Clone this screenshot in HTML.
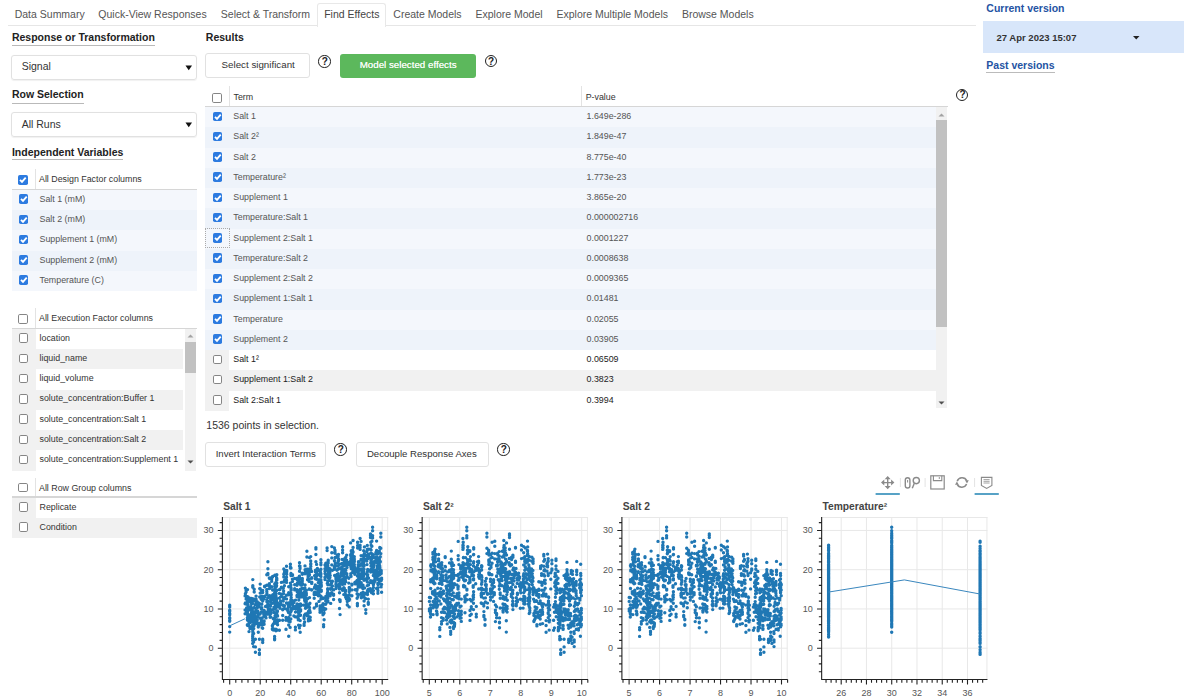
<!DOCTYPE html>
<html><head><meta charset="utf-8"><style>
html,body{margin:0;padding:0;background:#fff;width:1200px;height:696px;overflow:hidden;position:relative}
body{font-family:"Liberation Sans",sans-serif}
.t{position:absolute;white-space:nowrap;line-height:1}
.b{position:absolute}
</style></head><body>
<div class="b" style="left:8.00px;top:25.20px;width:968.00px;height:1.00px;background:#e6e6e6"></div>
<div class="b" style="left:316.70px;top:2.50px;width:67.10px;height:23.70px;border:1px solid #e8e8e8;border-bottom:none;border-radius:3px 3px 0 0;background:#fff"></div>
<div class="t" style="left:14.70px;top:9.01px;font-size:10.5px;color:#555;font-weight:normal;">Data Summary</div>
<div class="t" style="left:98.30px;top:9.01px;font-size:10.5px;color:#555;font-weight:normal;">Quick-View Responses</div>
<div class="t" style="left:220.80px;top:9.01px;font-size:10.5px;color:#555;font-weight:normal;">Select &amp; Transform</div>
<div class="t" style="left:324.20px;top:9.01px;font-size:10.5px;color:#444;font-weight:normal;">Find Effects</div>
<div class="t" style="left:393.30px;top:9.01px;font-size:10.5px;color:#555;font-weight:normal;">Create Models</div>
<div class="t" style="left:475.50px;top:9.01px;font-size:10.5px;color:#555;font-weight:normal;">Explore Model</div>
<div class="t" style="left:556.50px;top:9.01px;font-size:10.5px;color:#555;font-weight:normal;">Explore Multiple Models</div>
<div class="t" style="left:681.90px;top:9.01px;font-size:10.5px;color:#555;font-weight:normal;">Browse Models</div>
<div class="t" style="left:11.90px;top:31.61px;font-size:10.5px;color:#222;font-weight:bold;">Response or Transformation</div>
<div class="b" style="left:11.90px;top:44.60px;width:142.90px;height:1.00px;background:#b9b9b9"></div>
<div class="t" style="left:11.90px;top:89.41px;font-size:10.5px;color:#222;font-weight:bold;">Row Selection</div>
<div class="b" style="left:11.90px;top:102.60px;width:71.80px;height:1.00px;background:#b9b9b9"></div>
<div class="t" style="left:11.90px;top:147.01px;font-size:10.5px;color:#222;font-weight:bold;">Independent Variables</div>
<div class="b" style="left:11.90px;top:159.20px;width:111.40px;height:1.00px;background:#b9b9b9"></div>
<div class="b" style="left:11.30px;top:54.70px;width:185.70px;height:25.00px;border:1px solid #e1e1e1;border-radius:3px;box-sizing:border-box;box-shadow:0 0.5px 1px rgba(0,0,0,0.06)"></div>
<div class="t" style="left:21.70px;top:61.41px;font-size:10.5px;color:#333;font-weight:normal;">Signal</div>
<svg class="b" style="left:184.5px;top:64.60px" width="8" height="6"><path d="M0.5 0.5 L7 0.5 L3.75 5.2 Z" fill="#111"/></svg>
<div class="b" style="left:11.30px;top:112.00px;width:185.70px;height:24.70px;border:1px solid #e1e1e1;border-radius:3px;box-sizing:border-box;box-shadow:0 0.5px 1px rgba(0,0,0,0.06)"></div>
<div class="t" style="left:21.70px;top:118.61px;font-size:10.5px;color:#333;font-weight:normal;">All Runs</div>
<svg class="b" style="left:184.5px;top:121.75px" width="8" height="6"><path d="M0.5 0.5 L7 0.5 L3.75 5.2 Z" fill="#111"/></svg>
<div class="b" style="left:18.10px;top:175.20px;width:9.5px;height:9.5px;background:#2d7be0;border-radius:1.8px"><svg width="9.5" height="9.5" viewBox="0 0 10 10" style="position:absolute;left:0;top:0"><path d="M2.1 5.1 L4.2 7.3 L8.1 2.7" stroke="#fff" stroke-width="1.9" fill="none"/></svg></div>
<div class="b" style="left:35.20px;top:168.70px;width:1.00px;height:20.60px;background:#e3e3e3"></div>
<div class="t" style="left:39.00px;top:175.31px;font-size:8.85px;color:#333;font-weight:normal;">All Design Factor columns</div>
<div class="b" style="left:11.90px;top:188.70px;width:185.10px;height:1.20px;background:#d6d6d6"></div>
<div class="b" style="left:11.90px;top:189.90px;width:185.10px;height:20.25px;background:#f4f7fc"></div>
<div class="b" style="left:18.50px;top:194.30px;width:9.5px;height:9.5px;background:#2d7be0;border-radius:1.8px"><svg width="9.5" height="9.5" viewBox="0 0 10 10" style="position:absolute;left:0;top:0"><path d="M2.1 5.1 L4.2 7.3 L8.1 2.7" stroke="#fff" stroke-width="1.9" fill="none"/></svg></div>
<div class="t" style="left:39.50px;top:194.81px;font-size:8.85px;color:#555;font-weight:normal;">Salt 1 (mM)</div>
<div class="b" style="left:11.90px;top:210.15px;width:185.10px;height:20.25px;background:#eef3fa"></div>
<div class="b" style="left:18.50px;top:214.55px;width:9.5px;height:9.5px;background:#2d7be0;border-radius:1.8px"><svg width="9.5" height="9.5" viewBox="0 0 10 10" style="position:absolute;left:0;top:0"><path d="M2.1 5.1 L4.2 7.3 L8.1 2.7" stroke="#fff" stroke-width="1.9" fill="none"/></svg></div>
<div class="t" style="left:39.50px;top:215.06px;font-size:8.85px;color:#555;font-weight:normal;">Salt 2 (mM)</div>
<div class="b" style="left:11.90px;top:230.40px;width:185.10px;height:20.25px;background:#f4f7fc"></div>
<div class="b" style="left:18.50px;top:234.80px;width:9.5px;height:9.5px;background:#2d7be0;border-radius:1.8px"><svg width="9.5" height="9.5" viewBox="0 0 10 10" style="position:absolute;left:0;top:0"><path d="M2.1 5.1 L4.2 7.3 L8.1 2.7" stroke="#fff" stroke-width="1.9" fill="none"/></svg></div>
<div class="t" style="left:39.50px;top:235.31px;font-size:8.85px;color:#555;font-weight:normal;">Supplement 1 (mM)</div>
<div class="b" style="left:11.90px;top:250.65px;width:185.10px;height:20.25px;background:#eef3fa"></div>
<div class="b" style="left:18.50px;top:255.05px;width:9.5px;height:9.5px;background:#2d7be0;border-radius:1.8px"><svg width="9.5" height="9.5" viewBox="0 0 10 10" style="position:absolute;left:0;top:0"><path d="M2.1 5.1 L4.2 7.3 L8.1 2.7" stroke="#fff" stroke-width="1.9" fill="none"/></svg></div>
<div class="t" style="left:39.50px;top:255.56px;font-size:8.85px;color:#555;font-weight:normal;">Supplement 2 (mM)</div>
<div class="b" style="left:11.90px;top:270.90px;width:185.10px;height:20.25px;background:#f4f7fc"></div>
<div class="b" style="left:18.50px;top:275.30px;width:9.5px;height:9.5px;background:#2d7be0;border-radius:1.8px"><svg width="9.5" height="9.5" viewBox="0 0 10 10" style="position:absolute;left:0;top:0"><path d="M2.1 5.1 L4.2 7.3 L8.1 2.7" stroke="#fff" stroke-width="1.9" fill="none"/></svg></div>
<div class="t" style="left:39.50px;top:275.81px;font-size:8.85px;color:#555;font-weight:normal;">Temperature (C)</div>
<div class="b" style="left:18.10px;top:314.10px;width:7.6px;height:7.6px;border:0.95px solid #858585;border-radius:1.8px;background:#fff"></div>
<div class="b" style="left:35.20px;top:308.00px;width:1.00px;height:20.20px;background:#e3e3e3"></div>
<div class="t" style="left:39.00px;top:314.21px;font-size:8.85px;color:#333;font-weight:normal;">All Execution Factor columns</div>
<div class="b" style="left:11.90px;top:327.60px;width:185.10px;height:1.20px;background:#d6d6d6"></div>
<div class="b" style="left:11.90px;top:328.80px;width:171.60px;height:20.25px;background:#f1f1f1"></div>
<div class="b" style="left:35.50px;top:328.80px;width:148.00px;height:20.25px;background:#fff"></div>
<div class="b" style="left:18.50px;top:333.40px;width:7.6px;height:7.6px;border:0.95px solid #858585;border-radius:1.8px;background:#fff"></div>
<div class="t" style="left:39.50px;top:333.71px;font-size:8.85px;color:#333;font-weight:normal;">location</div>
<div class="b" style="left:11.90px;top:349.05px;width:171.60px;height:20.25px;background:#f1f1f1"></div>
<div class="b" style="left:18.50px;top:353.65px;width:7.6px;height:7.6px;border:0.95px solid #858585;border-radius:1.8px;background:#fff"></div>
<div class="t" style="left:39.50px;top:353.96px;font-size:8.85px;color:#333;font-weight:normal;">liquid_name</div>
<div class="b" style="left:11.90px;top:369.30px;width:171.60px;height:20.25px;background:#f1f1f1"></div>
<div class="b" style="left:35.50px;top:369.30px;width:148.00px;height:20.25px;background:#fff"></div>
<div class="b" style="left:18.50px;top:373.90px;width:7.6px;height:7.6px;border:0.95px solid #858585;border-radius:1.8px;background:#fff"></div>
<div class="t" style="left:39.50px;top:374.21px;font-size:8.85px;color:#333;font-weight:normal;">liquid_volume</div>
<div class="b" style="left:11.90px;top:389.55px;width:171.60px;height:20.25px;background:#f1f1f1"></div>
<div class="b" style="left:18.50px;top:394.15px;width:7.6px;height:7.6px;border:0.95px solid #858585;border-radius:1.8px;background:#fff"></div>
<div class="t" style="left:39.50px;top:394.46px;font-size:8.85px;color:#333;font-weight:normal;">solute_concentration:Buffer 1</div>
<div class="b" style="left:11.90px;top:409.80px;width:171.60px;height:20.25px;background:#f1f1f1"></div>
<div class="b" style="left:35.50px;top:409.80px;width:148.00px;height:20.25px;background:#fff"></div>
<div class="b" style="left:18.50px;top:414.40px;width:7.6px;height:7.6px;border:0.95px solid #858585;border-radius:1.8px;background:#fff"></div>
<div class="t" style="left:39.50px;top:414.71px;font-size:8.85px;color:#333;font-weight:normal;">solute_concentration:Salt 1</div>
<div class="b" style="left:11.90px;top:430.05px;width:171.60px;height:20.25px;background:#f1f1f1"></div>
<div class="b" style="left:18.50px;top:434.65px;width:7.6px;height:7.6px;border:0.95px solid #858585;border-radius:1.8px;background:#fff"></div>
<div class="t" style="left:39.50px;top:434.96px;font-size:8.85px;color:#333;font-weight:normal;">solute_concentration:Salt 2</div>
<div class="b" style="left:11.90px;top:450.30px;width:171.60px;height:20.25px;background:#f1f1f1"></div>
<div class="b" style="left:35.50px;top:450.30px;width:148.00px;height:20.25px;background:#fff"></div>
<div class="b" style="left:18.50px;top:454.90px;width:7.6px;height:7.6px;border:0.95px solid #858585;border-radius:1.8px;background:#fff"></div>
<div class="t" style="left:39.50px;top:455.21px;font-size:8.85px;color:#333;font-weight:normal;">solute_concentration:Supplement 1</div>
<div class="b" style="left:184.80px;top:328.80px;width:11.50px;height:141.75px;background:#f1f1f1"></div>
<div class="b" style="left:185.20px;top:342.00px;width:10.80px;height:30.80px;background:#c1c1c1"></div>
<svg class="b" style="left:187px;top:334.30px" width="7" height="4"><path d="M0.5 3.5 L3.5 0.5 L6.5 3.5 Z" fill="#a3a3a3"/></svg>
<svg class="b" style="left:187px;top:459.55px" width="7" height="4"><path d="M0.5 0.5 L3.5 3.5 L6.5 0.5 Z" fill="#505050"/></svg>
<div class="b" style="left:18.10px;top:482.90px;width:7.6px;height:7.6px;border:0.95px solid #858585;border-radius:1.8px;background:#fff"></div>
<div class="b" style="left:35.20px;top:478.40px;width:1.00px;height:18.60px;background:#e3e3e3"></div>
<div class="t" style="left:39.00px;top:483.81px;font-size:8.85px;color:#333;font-weight:normal;">All Row Group columns</div>
<div class="b" style="left:11.90px;top:496.40px;width:185.10px;height:1.20px;background:#d6d6d6"></div>
<div class="b" style="left:11.90px;top:497.60px;width:185.10px;height:20.25px;background:#f1f1f1"></div>
<div class="b" style="left:35.50px;top:497.60px;width:161.50px;height:20.25px;background:#fff"></div>
<div class="b" style="left:18.50px;top:502.20px;width:7.6px;height:7.6px;border:0.95px solid #858585;border-radius:1.8px;background:#fff"></div>
<div class="t" style="left:39.50px;top:502.51px;font-size:8.85px;color:#333;font-weight:normal;">Replicate</div>
<div class="b" style="left:11.90px;top:517.85px;width:185.10px;height:20.25px;background:#f1f1f1"></div>
<div class="b" style="left:18.50px;top:522.45px;width:7.6px;height:7.6px;border:0.95px solid #858585;border-radius:1.8px;background:#fff"></div>
<div class="t" style="left:39.50px;top:522.76px;font-size:8.85px;color:#333;font-weight:normal;">Condition</div>
<div class="t" style="left:205.80px;top:32.21px;font-size:10.5px;color:#222;font-weight:bold;">Results</div>
<div class="b" style="left:205.30px;top:53.40px;width:104.70px;height:25.00px;border:1px solid #e1e1e1;border-radius:3px;box-sizing:border-box;background:#fff"></div>
<div class="t" style="left:221.60px;top:60.25px;font-size:9.75px;color:#333;font-weight:normal;">Select significant</div>
<div class="b" style="left:318.30px;top:55.40px;width:10.40px;height:10.40px;border:1.1px solid #222;border-radius:50%"></div><div class="t" style="left:318.40px;top:57.00px;width:12.60px;text-align:center;font-size:10px;font-weight:bold;color:#222;line-height:10.5px">?</div>
<div class="b" style="left:339.75px;top:54.00px;width:136.45px;height:24.30px;background:#5cb85c;border-radius:3px"></div>
<div class="t" style="left:359.70px;top:60.45px;font-size:9.75px;color:#f4fbf4;font-weight:normal;text-shadow:0 0 0.3px #fff">Model selected effects</div>
<div class="b" style="left:484.70px;top:55.10px;width:10.40px;height:10.40px;border:1.1px solid #222;border-radius:50%"></div><div class="t" style="left:484.80px;top:56.70px;width:12.60px;text-align:center;font-size:10px;font-weight:bold;color:#222;line-height:10.5px">?</div>
<div class="b" style="left:212.00px;top:93.20px;width:7.6px;height:7.6px;border:0.95px solid #858585;border-radius:1.8px;background:#fff"></div>
<div class="b" style="left:229.10px;top:86.00px;width:1.00px;height:20.20px;background:#e3e3e3"></div>
<div class="b" style="left:581.20px;top:86.00px;width:1.00px;height:20.20px;background:#e3e3e3"></div>
<div class="t" style="left:233.50px;top:93.11px;font-size:8.85px;color:#333;font-weight:normal;">Term</div>
<div class="t" style="left:585.70px;top:93.11px;font-size:8.85px;color:#333;font-weight:normal;">P-value</div>
<div class="b" style="left:205.00px;top:106.00px;width:743.40px;height:1.20px;background:#d6d6d6"></div>
<div class="b" style="left:956.30px;top:88.80px;width:10.20px;height:10.20px;border:1.1px solid #222;border-radius:50%"></div><div class="t" style="left:956.40px;top:90.30px;width:12.40px;text-align:center;font-size:10px;font-weight:bold;color:#222;line-height:10.5px">?</div>
<div class="b" style="left:205.00px;top:107.20px;width:730.50px;height:20.25px;background:#f4f7fc"></div>
<div class="b" style="left:212.50px;top:111.60px;width:9.5px;height:9.5px;background:#2d7be0;border-radius:1.8px"><svg width="9.5" height="9.5" viewBox="0 0 10 10" style="position:absolute;left:0;top:0"><path d="M2.1 5.1 L4.2 7.3 L8.1 2.7" stroke="#fff" stroke-width="1.9" fill="none"/></svg></div>
<div class="t" style="left:233.30px;top:112.11px;font-size:8.85px;color:#555;font-weight:normal;">Salt 1</div>
<div class="t" style="left:586.50px;top:112.11px;font-size:8.85px;color:#555;font-weight:normal;">1.649e-286</div>
<div class="b" style="left:205.00px;top:127.45px;width:730.50px;height:20.25px;background:#eef3fa"></div>
<div class="b" style="left:212.50px;top:131.85px;width:9.5px;height:9.5px;background:#2d7be0;border-radius:1.8px"><svg width="9.5" height="9.5" viewBox="0 0 10 10" style="position:absolute;left:0;top:0"><path d="M2.1 5.1 L4.2 7.3 L8.1 2.7" stroke="#fff" stroke-width="1.9" fill="none"/></svg></div>
<div class="t" style="left:233.30px;top:132.36px;font-size:8.85px;color:#555;font-weight:normal;">Salt 2²</div>
<div class="t" style="left:586.50px;top:132.36px;font-size:8.85px;color:#555;font-weight:normal;">1.849e-47</div>
<div class="b" style="left:205.00px;top:147.70px;width:730.50px;height:20.25px;background:#f4f7fc"></div>
<div class="b" style="left:212.50px;top:152.10px;width:9.5px;height:9.5px;background:#2d7be0;border-radius:1.8px"><svg width="9.5" height="9.5" viewBox="0 0 10 10" style="position:absolute;left:0;top:0"><path d="M2.1 5.1 L4.2 7.3 L8.1 2.7" stroke="#fff" stroke-width="1.9" fill="none"/></svg></div>
<div class="t" style="left:233.30px;top:152.61px;font-size:8.85px;color:#555;font-weight:normal;">Salt 2</div>
<div class="t" style="left:586.50px;top:152.61px;font-size:8.85px;color:#555;font-weight:normal;">8.775e-40</div>
<div class="b" style="left:205.00px;top:167.95px;width:730.50px;height:20.25px;background:#eef3fa"></div>
<div class="b" style="left:212.50px;top:172.35px;width:9.5px;height:9.5px;background:#2d7be0;border-radius:1.8px"><svg width="9.5" height="9.5" viewBox="0 0 10 10" style="position:absolute;left:0;top:0"><path d="M2.1 5.1 L4.2 7.3 L8.1 2.7" stroke="#fff" stroke-width="1.9" fill="none"/></svg></div>
<div class="t" style="left:233.30px;top:172.86px;font-size:8.85px;color:#555;font-weight:normal;">Temperature²</div>
<div class="t" style="left:586.50px;top:172.86px;font-size:8.85px;color:#555;font-weight:normal;">1.773e-23</div>
<div class="b" style="left:205.00px;top:188.20px;width:730.50px;height:20.25px;background:#f4f7fc"></div>
<div class="b" style="left:212.50px;top:192.60px;width:9.5px;height:9.5px;background:#2d7be0;border-radius:1.8px"><svg width="9.5" height="9.5" viewBox="0 0 10 10" style="position:absolute;left:0;top:0"><path d="M2.1 5.1 L4.2 7.3 L8.1 2.7" stroke="#fff" stroke-width="1.9" fill="none"/></svg></div>
<div class="t" style="left:233.30px;top:193.11px;font-size:8.85px;color:#555;font-weight:normal;">Supplement 1</div>
<div class="t" style="left:586.50px;top:193.11px;font-size:8.85px;color:#555;font-weight:normal;">3.865e-20</div>
<div class="b" style="left:205.00px;top:208.45px;width:730.50px;height:20.25px;background:#eef3fa"></div>
<div class="b" style="left:212.50px;top:212.85px;width:9.5px;height:9.5px;background:#2d7be0;border-radius:1.8px"><svg width="9.5" height="9.5" viewBox="0 0 10 10" style="position:absolute;left:0;top:0"><path d="M2.1 5.1 L4.2 7.3 L8.1 2.7" stroke="#fff" stroke-width="1.9" fill="none"/></svg></div>
<div class="t" style="left:233.30px;top:213.36px;font-size:8.85px;color:#555;font-weight:normal;">Temperature:Salt 1</div>
<div class="t" style="left:586.50px;top:213.36px;font-size:8.85px;color:#555;font-weight:normal;">0.000002716</div>
<div class="b" style="left:205.00px;top:228.70px;width:730.50px;height:20.25px;background:#f4f7fc"></div>
<div class="b" style="left:212.50px;top:233.10px;width:9.5px;height:9.5px;background:#2d7be0;border-radius:1.8px"><svg width="9.5" height="9.5" viewBox="0 0 10 10" style="position:absolute;left:0;top:0"><path d="M2.1 5.1 L4.2 7.3 L8.1 2.7" stroke="#fff" stroke-width="1.9" fill="none"/></svg></div>
<div class="t" style="left:233.30px;top:233.61px;font-size:8.85px;color:#555;font-weight:normal;">Supplement 2:Salt 1</div>
<div class="t" style="left:586.50px;top:233.61px;font-size:8.85px;color:#555;font-weight:normal;">0.0001227</div>
<div class="b" style="left:205.20px;top:228.20px;width:24.60px;height:19.40px;border:1px dotted #aaa;box-sizing:border-box"></div>
<div class="b" style="left:205.00px;top:248.95px;width:730.50px;height:20.25px;background:#eef3fa"></div>
<div class="b" style="left:212.50px;top:253.35px;width:9.5px;height:9.5px;background:#2d7be0;border-radius:1.8px"><svg width="9.5" height="9.5" viewBox="0 0 10 10" style="position:absolute;left:0;top:0"><path d="M2.1 5.1 L4.2 7.3 L8.1 2.7" stroke="#fff" stroke-width="1.9" fill="none"/></svg></div>
<div class="t" style="left:233.30px;top:253.86px;font-size:8.85px;color:#555;font-weight:normal;">Temperature:Salt 2</div>
<div class="t" style="left:586.50px;top:253.86px;font-size:8.85px;color:#555;font-weight:normal;">0.0008638</div>
<div class="b" style="left:205.00px;top:269.20px;width:730.50px;height:20.25px;background:#f4f7fc"></div>
<div class="b" style="left:212.50px;top:273.60px;width:9.5px;height:9.5px;background:#2d7be0;border-radius:1.8px"><svg width="9.5" height="9.5" viewBox="0 0 10 10" style="position:absolute;left:0;top:0"><path d="M2.1 5.1 L4.2 7.3 L8.1 2.7" stroke="#fff" stroke-width="1.9" fill="none"/></svg></div>
<div class="t" style="left:233.30px;top:274.11px;font-size:8.85px;color:#555;font-weight:normal;">Supplement 2:Salt 2</div>
<div class="t" style="left:586.50px;top:274.11px;font-size:8.85px;color:#555;font-weight:normal;">0.0009365</div>
<div class="b" style="left:205.00px;top:289.45px;width:730.50px;height:20.25px;background:#eef3fa"></div>
<div class="b" style="left:212.50px;top:293.85px;width:9.5px;height:9.5px;background:#2d7be0;border-radius:1.8px"><svg width="9.5" height="9.5" viewBox="0 0 10 10" style="position:absolute;left:0;top:0"><path d="M2.1 5.1 L4.2 7.3 L8.1 2.7" stroke="#fff" stroke-width="1.9" fill="none"/></svg></div>
<div class="t" style="left:233.30px;top:294.36px;font-size:8.85px;color:#555;font-weight:normal;">Supplement 1:Salt 1</div>
<div class="t" style="left:586.50px;top:294.36px;font-size:8.85px;color:#555;font-weight:normal;">0.01481</div>
<div class="b" style="left:205.00px;top:309.70px;width:730.50px;height:20.25px;background:#f4f7fc"></div>
<div class="b" style="left:212.50px;top:314.10px;width:9.5px;height:9.5px;background:#2d7be0;border-radius:1.8px"><svg width="9.5" height="9.5" viewBox="0 0 10 10" style="position:absolute;left:0;top:0"><path d="M2.1 5.1 L4.2 7.3 L8.1 2.7" stroke="#fff" stroke-width="1.9" fill="none"/></svg></div>
<div class="t" style="left:233.30px;top:314.61px;font-size:8.85px;color:#555;font-weight:normal;">Temperature</div>
<div class="t" style="left:586.50px;top:314.61px;font-size:8.85px;color:#555;font-weight:normal;">0.02055</div>
<div class="b" style="left:205.00px;top:329.95px;width:730.50px;height:20.25px;background:#eef3fa"></div>
<div class="b" style="left:212.50px;top:334.35px;width:9.5px;height:9.5px;background:#2d7be0;border-radius:1.8px"><svg width="9.5" height="9.5" viewBox="0 0 10 10" style="position:absolute;left:0;top:0"><path d="M2.1 5.1 L4.2 7.3 L8.1 2.7" stroke="#fff" stroke-width="1.9" fill="none"/></svg></div>
<div class="t" style="left:233.30px;top:334.86px;font-size:8.85px;color:#555;font-weight:normal;">Supplement 2</div>
<div class="t" style="left:586.50px;top:334.86px;font-size:8.85px;color:#555;font-weight:normal;">0.03905</div>
<div class="b" style="left:205.00px;top:350.20px;width:730.50px;height:20.25px;background:#f1f1f1"></div>
<div class="b" style="left:228.50px;top:350.20px;width:707.00px;height:20.25px;background:#fff"></div>
<div class="b" style="left:212.50px;top:354.60px;width:7.6px;height:7.6px;border:0.95px solid #858585;border-radius:1.8px;background:#fff"></div>
<div class="t" style="left:233.30px;top:355.11px;font-size:8.85px;color:#222;font-weight:normal;">Salt 1²</div>
<div class="t" style="left:586.50px;top:355.11px;font-size:8.85px;color:#222;font-weight:normal;">0.06509</div>
<div class="b" style="left:205.00px;top:370.45px;width:730.50px;height:20.25px;background:#f1f1f1"></div>
<div class="b" style="left:212.50px;top:374.85px;width:7.6px;height:7.6px;border:0.95px solid #858585;border-radius:1.8px;background:#fff"></div>
<div class="t" style="left:233.30px;top:375.36px;font-size:8.85px;color:#222;font-weight:normal;">Supplement 1:Salt 2</div>
<div class="t" style="left:586.50px;top:375.36px;font-size:8.85px;color:#222;font-weight:normal;">0.3823</div>
<div class="b" style="left:205.00px;top:390.70px;width:730.50px;height:20.25px;background:#f1f1f1"></div>
<div class="b" style="left:228.50px;top:390.70px;width:707.00px;height:20.25px;background:#fff"></div>
<div class="b" style="left:212.50px;top:395.10px;width:7.6px;height:7.6px;border:0.95px solid #858585;border-radius:1.8px;background:#fff"></div>
<div class="t" style="left:233.30px;top:395.61px;font-size:8.85px;color:#222;font-weight:normal;">Salt 2:Salt 1</div>
<div class="t" style="left:586.50px;top:395.61px;font-size:8.85px;color:#222;font-weight:normal;">0.3994</div>
<div class="b" style="left:935.50px;top:107.20px;width:11.50px;height:301.30px;background:#f1f1f1"></div>
<div class="b" style="left:935.80px;top:120.20px;width:11.20px;height:207.10px;background:#c1c1c1"></div>
<svg class="b" style="left:938px;top:112.5px" width="7" height="4"><path d="M0.5 3.5 L3.5 0.5 L6.5 3.5 Z" fill="#a3a3a3"/></svg>
<svg class="b" style="left:938px;top:400.5px" width="7" height="4"><path d="M0.5 0.5 L3.5 3.5 L6.5 0.5 Z" fill="#505050"/></svg>
<div class="t" style="left:206.30px;top:420.41px;font-size:10.5px;color:#333;font-weight:normal;">1536 points in selection.</div>
<div class="b" style="left:205.40px;top:441.70px;width:120.90px;height:25.00px;border:1px solid #e1e1e1;border-radius:3px;box-sizing:border-box;background:#fff"></div>
<div class="t" style="left:215.70px;top:448.57px;font-size:9.6px;color:#333;font-weight:normal;">Invert Interaction Terms</div>
<div class="b" style="left:334.30px;top:443.40px;width:10.40px;height:10.40px;border:1.1px solid #222;border-radius:50%"></div><div class="t" style="left:334.40px;top:445.00px;width:12.60px;text-align:center;font-size:10px;font-weight:bold;color:#222;line-height:10.5px">?</div>
<div class="b" style="left:355.90px;top:441.70px;width:132.80px;height:25.00px;border:1px solid #e1e1e1;border-radius:3px;box-sizing:border-box;background:#fff"></div>
<div class="t" style="left:366.90px;top:448.57px;font-size:9.6px;color:#333;font-weight:normal;">Decouple Response Axes</div>
<div class="b" style="left:497.30px;top:443.40px;width:10.40px;height:10.40px;border:1.1px solid #222;border-radius:50%"></div><div class="t" style="left:497.40px;top:445.00px;width:12.60px;text-align:center;font-size:10px;font-weight:bold;color:#222;line-height:10.5px">?</div>
<div class="t" style="left:986.30px;top:3.01px;font-size:10.5px;color:#2453a3;font-weight:bold;">Current version</div>
<div class="b" style="left:982.50px;top:21.10px;width:201.20px;height:32.20px;background:#d8e6fa"></div>
<div class="t" style="left:996.50px;top:32.76px;font-size:9.5px;color:#333;font-weight:bold;">27 Apr 2023 15:07</div>
<svg class="b" style="left:1132.5px;top:35.6px" width="7" height="4"><path d="M0 0 L6.5 0 L3.25 3.6 Z" fill="#222"/></svg>
<div class="t" style="left:986.30px;top:59.51px;font-size:10.5px;color:#2453a3;font-weight:bold;">Past versions</div>
<div class="b" style="left:986.30px;top:72.20px;width:68.30px;height:1.20px;background:#bbb"></div>
<div class="t" style="left:223.20px;top:501.82px;font-size:10.25px;font-weight:bold;color:#444">Salt 1</div>
<svg class="b" style="left:0;top:0" width="1200" height="696"><path d="M222.40 530.45H388.20M222.40 569.70H388.20M222.40 608.95H388.20M222.40 648.20H388.20M229.70 517.00V679.50M260.20 517.00V679.50M290.70 517.00V679.50M321.20 517.00V679.50M351.70 517.00V679.50M382.20 517.00V679.50M222.40 517.50H388.20M387.70 517.00V679.50" stroke="#e8e8e8" stroke-width="1" fill="none"/><path d="M229.7 626.6h0M229.7 610.7h0M229.7 610.3h0M229.7 618.4h0M229.7 610.8h0M229.7 632.1h0M229.7 606.9h0M229.7 620.7h0M229.7 620.5h0M229.7 605.2h0M229.7 611.3h0M229.7 621.3h0M229.7 617.7h0M229.7 613.4h0M229.7 614.7h0M229.7 606.7h0M245.1 595.9h0M245.1 613.7h0M245.1 603.7h0M245.1 610.0h0M246.1 590.2h0M246.1 592.1h0M246.1 599.1h0M246.1 604.0h0M249.0 622.9h0M249.0 625.9h0M249.0 631.6h0M249.0 616.2h0M247.4 625.3h0M247.4 619.8h0M247.4 624.7h0M247.4 619.3h0M250.0 622.3h0M250.0 628.5h0M250.0 626.8h0M250.0 627.3h0M250.9 619.8h0M250.9 620.0h0M250.9 616.8h0M250.9 602.3h0M372.6 527.2h0M372.6 530.8h0M372.6 537.9h0M372.6 535.7h0M368.3 599.1h0M368.3 604.2h0M368.3 602.4h0M368.3 603.4h0M292.5 574.7h0M292.5 579.1h0M292.5 575.4h0M292.5 581.4h0M252.8 586.8h0M252.8 587.3h0M252.8 585.8h0M252.8 579.6h0M364.4 555.4h0M364.4 559.1h0M364.4 553.7h0M364.4 546.9h0M345.0 561.1h0M345.0 569.5h0M345.0 562.6h0M345.0 561.0h0M351.0 567.4h0M351.0 576.4h0M351.0 564.1h0M351.0 565.1h0M375.9 557.5h0M375.9 559.6h0M375.9 554.1h0M375.9 552.4h0M300.6 609.8h0M300.6 610.7h0M300.6 611.1h0M300.6 615.2h0M364.0 573.3h0M364.0 556.5h0M364.0 578.7h0M364.0 560.3h0M330.2 575.4h0M330.2 584.9h0M330.2 593.8h0M330.2 595.7h0M252.7 638.7h0M252.7 636.0h0M252.7 636.2h0M252.7 640.4h0M342.6 563.1h0M342.6 552.8h0M342.6 550.0h0M342.6 546.8h0M355.2 569.7h0M355.2 568.2h0M355.2 572.1h0M355.2 570.7h0M315.9 549.1h0M315.9 547.8h0M315.9 554.5h0M315.9 561.8h0M259.7 603.9h0M259.7 604.1h0M259.7 588.6h0M259.7 597.0h0M374.9 578.1h0M374.9 577.8h0M374.9 581.2h0M374.9 570.4h0M250.7 608.5h0M250.7 614.2h0M250.7 606.8h0M250.7 601.1h0M311.8 582.8h0M311.8 589.7h0M311.8 577.6h0M311.8 582.2h0M331.8 557.9h0M331.8 546.6h0M331.8 564.9h0M331.8 552.7h0M358.2 584.9h0M358.2 581.4h0M358.2 595.5h0M358.2 585.2h0M316.6 585.9h0M316.6 592.6h0M316.6 573.8h0M316.6 575.7h0M341.6 568.7h0M341.6 573.7h0M341.6 572.3h0M341.6 567.3h0M374.6 570.3h0M374.6 561.4h0M374.6 571.7h0M374.6 574.6h0M298.8 600.1h0M298.8 593.8h0M298.8 591.1h0M298.8 597.2h0M376.8 551.8h0M376.8 558.3h0M376.8 550.9h0M376.8 557.1h0M341.1 569.2h0M341.1 563.9h0M341.1 568.6h0M341.1 568.3h0M267.8 605.7h0M267.8 604.1h0M267.8 601.3h0M267.8 597.8h0M320.7 585.4h0M320.7 586.8h0M320.7 585.9h0M320.7 576.2h0M349.2 595.2h0M349.2 587.4h0M349.2 594.6h0M349.2 589.1h0M338.2 576.3h0M338.2 584.7h0M338.2 573.6h0M338.2 580.2h0M254.2 600.2h0M254.2 591.9h0M254.2 592.1h0M254.2 589.3h0M282.7 609.8h0M282.7 605.2h0M282.7 615.5h0M282.7 620.3h0M344.8 564.5h0M344.8 558.5h0M344.8 572.6h0M344.8 562.6h0M328.2 561.1h0M328.2 573.7h0M328.2 560.2h0M328.2 563.0h0M283.3 593.8h0M283.3 601.1h0M283.3 588.2h0M283.3 605.2h0M353.9 566.5h0M353.9 564.8h0M353.9 569.9h0M353.9 570.9h0M378.7 559.1h0M378.7 553.3h0M378.7 575.3h0M378.7 568.7h0M346.5 595.5h0M346.5 597.8h0M346.5 596.4h0M346.5 599.0h0M323.6 613.7h0M323.6 626.7h0M323.6 613.5h0M323.6 624.8h0M346.8 573.7h0M346.8 565.8h0M346.8 565.9h0M346.8 577.1h0M350.8 561.2h0M350.8 554.4h0M350.8 566.3h0M350.8 556.0h0M281.4 582.4h0M281.4 596.5h0M281.4 587.2h0M281.4 594.1h0M275.0 609.3h0M275.0 608.5h0M275.0 613.1h0M275.0 615.9h0M324.1 608.5h0M324.1 619.7h0M324.1 613.1h0M324.1 610.3h0M370.7 570.5h0M370.7 562.9h0M370.7 570.3h0M370.7 570.6h0M340.1 600.3h0M340.1 601.5h0M340.1 614.6h0M340.1 600.0h0M361.3 593.1h0M361.3 597.8h0M361.3 585.8h0M361.3 585.4h0M373.3 570.8h0M373.3 557.6h0M373.3 556.8h0M373.3 566.4h0M368.5 578.0h0M368.5 589.1h0M368.5 590.8h0M368.5 585.0h0M358.2 564.8h0M358.2 566.8h0M358.2 571.7h0M358.2 572.4h0M304.3 592.6h0M304.3 591.6h0M304.3 605.1h0M304.3 593.4h0M343.6 575.9h0M343.6 579.0h0M343.6 580.1h0M343.6 573.2h0M325.0 577.6h0M325.0 577.3h0M325.0 579.5h0M325.0 568.6h0M286.0 617.5h0M286.0 629.4h0M286.0 629.3h0M286.0 620.2h0M318.3 589.4h0M318.3 589.5h0M318.3 593.0h0M318.3 595.8h0M247.4 617.6h0M247.4 613.6h0M247.4 608.1h0M247.4 612.8h0M336.0 565.7h0M336.0 579.6h0M336.0 581.7h0M336.0 588.5h0M302.3 583.4h0M302.3 580.0h0M302.3 578.5h0M302.3 574.3h0M377.4 565.6h0M377.4 562.6h0M377.4 566.9h0M377.4 554.1h0M335.0 553.3h0M335.0 550.3h0M335.0 552.0h0M335.0 552.2h0M265.5 616.9h0M265.5 606.4h0M265.5 614.1h0M265.5 616.8h0M347.3 604.7h0M347.3 605.1h0M347.3 601.6h0M347.3 597.2h0M286.7 570.4h0M286.7 571.7h0M286.7 574.3h0M286.7 570.6h0M274.8 583.8h0M274.8 575.2h0M274.8 596.5h0M274.8 584.7h0M361.1 555.6h0M361.1 559.7h0M361.1 559.3h0M361.1 541.4h0M361.1 578.5h0M361.1 569.7h0M361.1 575.4h0M361.1 587.0h0M267.9 568.7h0M267.9 574.6h0M267.9 561.8h0M267.9 573.5h0M276.6 605.1h0M276.6 590.5h0M276.6 598.8h0M276.6 600.1h0M378.0 587.6h0M378.0 567.2h0M378.0 576.1h0M378.0 584.6h0M251.6 612.2h0M251.6 617.2h0M251.6 614.4h0M251.6 616.7h0M325.0 573.6h0M325.0 565.0h0M325.0 568.7h0M325.0 571.3h0M292.8 601.3h0M292.8 600.8h0M292.8 607.8h0M292.8 608.9h0M334.4 566.6h0M334.4 567.4h0M334.4 560.8h0M334.4 548.0h0M245.4 603.0h0M245.4 595.4h0M245.4 593.7h0M245.4 588.1h0M338.7 568.7h0M338.7 580.9h0M338.7 568.5h0M338.7 564.4h0M258.3 623.2h0M258.3 627.0h0M258.3 632.3h0M258.3 624.7h0M372.3 561.8h0M372.3 554.7h0M372.3 571.2h0M372.3 554.3h0M381.6 578.1h0M381.6 579.6h0M381.6 584.4h0M381.6 592.3h0M365.8 598.6h0M365.8 609.7h0M365.8 593.3h0M365.8 613.3h0M357.1 594.0h0M357.1 593.7h0M357.1 589.2h0M357.1 598.3h0M253.6 639.9h0M253.6 641.9h0M253.6 633.5h0M253.6 646.6h0M353.1 547.4h0M353.1 551.9h0M353.1 556.8h0M353.1 540.5h0M266.8 591.3h0M266.8 585.2h0M266.8 589.4h0M266.8 574.8h0M295.5 612.1h0M295.5 608.8h0M295.5 600.1h0M295.5 606.5h0M320.6 569.8h0M320.6 572.7h0M320.6 575.4h0M320.6 574.6h0M318.3 574.7h0M318.3 590.2h0M318.3 582.5h0M318.3 570.8h0M270.4 616.7h0M270.4 606.2h0M270.4 609.7h0M270.4 605.0h0M363.7 569.2h0M363.7 550.8h0M363.7 554.9h0M363.7 562.1h0M350.6 560.9h0M350.6 562.2h0M350.6 542.9h0M350.6 555.0h0M299.4 581.7h0M299.4 583.8h0M299.4 576.3h0M299.4 579.1h0M381.2 580.5h0M381.2 571.7h0M381.2 570.4h0M381.2 573.5h0M294.7 589.9h0M294.7 588.8h0M294.7 584.8h0M294.7 578.5h0M259.1 606.6h0M259.1 603.3h0M259.1 613.6h0M259.1 603.5h0M371.1 550.1h0M371.1 558.6h0M371.1 545.3h0M371.1 549.9h0M299.4 612.2h0M299.4 627.9h0M299.4 607.1h0M299.4 604.4h0M297.1 589.6h0M297.1 604.0h0M297.1 591.0h0M297.1 596.7h0M269.6 578.5h0M269.6 586.3h0M269.6 588.5h0M269.6 595.7h0M300.0 568.5h0M300.0 582.2h0M300.0 567.6h0M300.0 566.1h0M279.3 589.6h0M279.3 593.4h0M279.3 606.1h0M279.3 598.1h0M306.9 569.2h0M306.9 569.4h0M306.9 557.0h0M306.9 551.2h0M342.1 568.3h0M342.1 559.4h0M342.1 571.8h0M342.1 569.2h0M373.9 573.6h0M373.9 565.8h0M373.9 582.1h0M373.9 575.4h0M353.1 559.4h0M353.1 560.2h0M353.1 570.6h0M353.1 570.6h0M254.5 614.4h0M254.5 607.9h0M254.5 623.9h0M254.5 614.3h0M280.6 601.7h0M280.6 596.9h0M280.6 600.9h0M280.6 603.5h0M300.5 605.3h0M300.5 606.0h0M300.5 609.6h0M300.5 604.0h0M377.9 590.7h0M377.9 584.3h0M377.9 593.2h0M377.9 583.2h0M247.5 589.6h0M247.5 600.7h0M247.5 598.2h0M247.5 604.1h0M283.6 593.6h0M283.6 608.7h0M283.6 591.0h0M283.6 598.9h0M361.7 594.4h0M361.7 585.2h0M361.7 596.6h0M361.7 595.6h0M367.7 574.8h0M367.7 569.5h0M367.7 570.7h0M367.7 557.8h0M342.4 589.1h0M342.4 580.7h0M342.4 574.8h0M342.4 579.6h0M376.6 578.3h0M376.6 588.5h0M376.6 577.3h0M376.6 574.5h0M275.9 594.0h0M275.9 601.5h0M275.9 614.6h0M275.9 607.8h0M352.5 550.3h0M352.5 562.4h0M352.5 564.5h0M352.5 553.8h0M291.2 611.1h0M291.2 609.0h0M291.2 597.4h0M291.2 601.4h0M379.4 580.1h0M379.4 579.3h0M379.4 574.4h0M379.4 580.9h0M335.2 557.5h0M335.2 565.3h0M335.2 563.1h0M335.2 557.7h0M283.8 582.0h0M283.8 574.2h0M283.8 577.0h0M283.8 568.9h0M270.1 613.8h0M270.1 611.6h0M270.1 617.2h0M270.1 613.0h0M360.1 549.4h0M360.1 538.5h0M360.1 545.3h0M360.1 547.2h0M250.0 622.2h0M250.0 627.8h0M250.0 617.9h0M250.0 622.7h0M333.6 594.3h0M333.6 589.9h0M333.6 599.5h0M333.6 595.2h0M288.7 592.6h0M288.7 593.6h0M288.7 586.7h0M288.7 594.8h0M290.8 619.0h0M290.8 601.0h0M290.8 603.5h0M290.8 611.8h0M357.6 542.6h0M357.6 542.1h0M357.6 548.0h0M357.6 545.5h0M255.4 639.2h0M255.4 652.3h0M255.4 652.3h0M255.4 646.9h0M309.9 603.3h0M309.9 611.8h0M309.9 611.3h0M309.9 603.2h0M286.0 579.3h0M286.0 579.0h0M286.0 578.3h0M286.0 578.3h0M286.5 609.1h0M286.5 595.3h0M286.5 598.9h0M286.5 602.9h0M378.6 563.3h0M378.6 563.2h0M378.6 558.9h0M378.6 561.2h0M367.3 545.4h0M367.3 549.1h0M367.3 555.0h0M367.3 550.2h0M381.1 572.2h0M381.1 572.1h0M381.1 572.7h0M381.1 586.9h0M349.2 591.8h0M349.2 598.4h0M349.2 600.2h0M349.2 606.9h0M319.0 601.4h0M319.0 582.5h0M319.0 580.3h0M319.0 579.8h0M332.4 570.2h0M332.4 585.9h0M332.4 581.2h0M332.4 589.2h0M327.3 595.3h0M327.3 583.4h0M327.3 575.9h0M327.3 593.4h0M295.4 616.9h0M295.4 616.9h0M295.4 627.3h0M295.4 629.9h0M287.8 609.3h0M287.8 610.4h0M287.8 610.7h0M287.8 604.3h0M262.7 639.3h0M262.7 642.5h0M262.7 640.5h0M262.7 628.2h0M255.2 621.6h0M255.2 624.0h0M255.2 612.2h0M255.2 617.6h0M276.6 577.7h0M276.6 580.2h0M276.6 585.7h0M276.6 579.7h0M328.3 572.0h0M328.3 578.1h0M328.3 578.1h0M328.3 569.4h0M305.1 569.7h0M305.1 585.0h0M305.1 572.4h0M305.1 569.7h0M361.2 582.7h0M361.2 578.2h0M361.2 584.0h0M361.2 584.5h0M276.8 579.9h0M276.8 574.8h0M276.8 583.1h0M276.8 578.8h0M314.6 592.2h0M314.6 575.6h0M314.6 587.2h0M314.6 587.9h0M344.4 570.2h0M344.4 560.6h0M344.4 560.5h0M344.4 559.4h0M316.6 579.3h0M316.6 575.0h0M316.6 572.3h0M316.6 564.4h0M356.9 571.7h0M356.9 590.4h0M356.9 583.9h0M356.9 580.6h0M321.5 610.9h0M321.5 609.6h0M321.5 605.6h0M321.5 606.2h0M307.5 605.0h0M307.5 615.9h0M307.5 613.5h0M307.5 598.7h0M262.7 598.5h0M262.7 592.5h0M262.7 601.1h0M262.7 590.5h0M379.4 564.1h0M379.4 559.3h0M379.4 551.1h0M379.4 562.8h0M327.7 592.1h0M327.7 588.7h0M327.7 592.3h0M327.7 589.8h0M289.5 606.0h0M289.5 606.6h0M289.5 604.8h0M289.5 603.8h0M379.8 571.5h0M379.8 574.7h0M379.8 557.5h0M379.8 566.1h0M302.1 573.3h0M302.1 581.8h0M302.1 582.5h0M302.1 574.0h0M329.9 570.8h0M329.9 568.6h0M329.9 572.8h0M329.9 577.6h0M346.7 555.1h0M346.7 560.3h0M346.7 574.2h0M346.7 562.3h0M304.6 622.0h0M304.6 615.0h0M304.6 598.4h0M304.6 600.1h0M377.6 561.8h0M377.6 565.4h0M377.6 559.0h0M377.6 553.2h0M275.9 593.4h0M275.9 604.0h0M275.9 595.7h0M275.9 582.5h0M309.5 569.0h0M309.5 572.1h0M309.5 557.6h0M309.5 574.8h0M274.6 621.8h0M274.6 639.7h0M274.6 636.4h0M274.6 638.5h0M327.8 575.7h0M327.8 565.8h0M327.8 570.1h0M327.8 567.2h0M290.9 599.7h0M290.9 592.9h0M290.9 585.1h0M290.9 587.6h0M298.3 611.9h0M298.3 609.1h0M298.3 619.9h0M298.3 610.4h0M297.0 590.3h0M297.0 585.3h0M297.0 605.5h0M297.0 595.5h0M358.2 586.5h0M358.2 582.9h0M358.2 583.0h0M358.2 576.6h0M299.5 565.9h0M299.5 571.3h0M299.5 562.7h0M299.5 577.8h0M252.3 610.8h0M252.3 614.0h0M252.3 603.2h0M252.3 615.3h0M339.9 587.2h0M339.9 584.2h0M339.9 579.8h0M339.9 576.9h0M347.0 576.4h0M347.0 561.9h0M347.0 567.3h0M347.0 567.5h0M252.7 637.1h0M252.7 643.4h0M252.7 625.0h0M252.7 621.7h0M330.1 569.2h0M330.1 588.7h0M330.1 570.2h0M330.1 580.6h0M253.7 611.8h0M253.7 618.1h0M253.7 628.6h0M253.7 620.8h0M303.3 594.2h0M303.3 605.1h0M303.3 596.3h0M303.3 594.2h0M314.2 594.5h0M314.2 592.9h0M314.2 608.0h0M314.2 598.2h0M338.2 586.3h0M338.2 575.0h0M338.2 577.7h0M338.2 580.8h0M321.2 591.1h0M321.2 598.0h0M321.2 582.7h0M321.2 586.4h0M262.2 627.7h0M262.2 622.7h0M262.2 617.9h0M262.2 624.5h0M266.9 594.6h0M266.9 600.0h0M266.9 593.2h0M266.9 601.7h0M261.2 599.3h0M261.2 590.3h0M261.2 599.2h0M261.2 608.2h0M247.8 610.5h0M247.8 620.4h0M247.8 599.4h0M247.8 615.5h0M260.1 614.0h0M260.1 623.3h0M260.1 618.3h0M260.1 624.8h0M306.3 607.8h0M306.3 603.1h0M306.3 594.2h0M306.3 593.4h0M258.0 616.7h0M258.0 611.6h0M258.0 603.6h0M258.0 615.4h0M277.4 620.9h0M277.4 621.9h0M277.4 615.5h0M277.4 630.1h0M276.7 623.6h0M276.7 607.0h0M276.7 612.3h0M276.7 614.2h0M266.0 617.9h0M266.0 612.1h0M266.0 606.1h0M266.0 614.4h0M276.1 601.2h0M276.1 597.1h0M276.1 587.2h0M276.1 598.9h0M348.8 562.7h0M348.8 564.2h0M348.8 583.1h0M348.8 578.3h0M316.3 589.0h0M316.3 570.8h0M316.3 576.8h0M316.3 574.6h0M320.9 576.4h0M320.9 562.8h0M320.9 559.7h0M320.9 564.8h0M370.5 533.9h0M370.5 537.6h0M370.5 549.2h0M370.5 535.6h0M246.6 597.7h0M246.6 612.4h0M246.6 610.5h0M246.6 607.9h0M267.9 614.0h0M267.9 611.6h0M267.9 604.0h0M267.9 607.3h0M337.3 557.2h0M337.3 556.0h0M337.3 569.9h0M337.3 555.2h0M306.3 601.3h0M306.3 590.5h0M306.3 593.1h0M306.3 595.2h0M327.1 563.1h0M327.1 547.9h0M327.1 564.2h0M327.1 550.6h0M325.9 596.3h0M325.9 597.2h0M325.9 598.2h0M325.9 598.7h0M268.2 612.4h0M268.2 608.7h0M268.2 605.8h0M268.2 611.5h0M338.5 560.8h0M338.5 565.6h0M338.5 558.9h0M338.5 554.5h0M284.4 585.8h0M284.4 580.5h0M284.4 572.8h0M284.4 570.2h0M253.8 625.9h0M253.8 607.6h0M253.8 612.6h0M253.8 624.6h0M271.7 577.4h0M271.7 579.1h0M271.7 581.2h0M271.7 578.6h0M300.4 589.3h0M300.4 604.6h0M300.4 596.5h0M300.4 597.1h0M364.1 605.8h0M364.1 595.3h0M364.1 601.0h0M364.1 597.2h0M343.8 565.9h0M343.8 565.2h0M343.8 575.9h0M343.8 576.4h0M366.8 559.0h0M366.8 551.6h0M366.8 561.0h0M366.8 555.9h0M290.1 612.8h0M290.1 627.4h0M290.1 614.9h0M290.1 621.8h0M300.2 632.2h0M300.2 632.2h0M300.2 620.6h0M300.2 625.5h0M325.8 563.2h0M325.8 568.3h0M325.8 574.6h0M325.8 566.7h0M251.0 614.8h0M251.0 618.0h0M251.0 619.1h0M251.0 614.0h0M357.4 605.7h0M357.4 603.5h0M357.4 597.6h0M357.4 603.9h0M358.3 586.3h0M358.3 580.4h0M358.3 574.9h0M358.3 574.5h0M367.3 578.0h0M367.3 581.9h0M367.3 585.6h0M367.3 571.9h0M370.8 553.3h0M370.8 563.3h0M370.8 557.4h0M370.8 542.2h0M309.5 604.1h0M309.5 610.2h0M309.5 597.6h0M309.5 607.5h0M321.3 586.1h0M321.3 590.1h0M321.3 585.1h0M321.3 591.2h0M260.2 588.8h0M260.2 584.1h0M260.2 597.0h0M260.2 593.1h0M291.2 599.8h0M291.2 590.1h0M291.2 589.1h0M291.2 594.7h0M308.9 607.0h0M308.9 616.7h0M308.9 613.1h0M308.9 611.0h0M304.1 618.5h0M304.1 624.1h0M304.1 616.9h0M304.1 625.4h0M297.3 592.0h0M297.3 579.9h0M297.3 583.2h0M297.3 578.2h0M371.6 592.7h0M371.6 589.7h0M371.6 582.6h0M371.6 591.0h0M361.0 560.2h0M361.0 568.9h0M361.0 570.2h0M361.0 563.8h0M248.0 618.8h0M248.0 607.0h0M248.0 616.1h0M248.0 610.6h0M363.6 562.6h0M363.6 571.7h0M363.6 565.3h0M363.6 576.0h0M268.5 610.2h0M268.5 612.1h0M268.5 614.0h0M268.5 610.0h0M310.8 564.1h0M310.8 566.4h0M310.8 571.1h0M310.8 563.6h0M249.3 607.1h0M249.3 597.9h0M249.3 598.5h0M249.3 609.8h0M311.7 590.1h0M311.7 571.4h0M311.7 578.2h0M311.7 583.4h0M308.1 575.5h0M308.1 574.9h0M308.1 576.9h0M308.1 578.7h0M320.9 583.8h0M320.9 583.2h0M320.9 576.6h0M320.9 582.7h0M307.6 573.1h0M307.6 579.7h0M307.6 569.3h0M307.6 571.3h0M342.7 580.0h0M342.7 570.3h0M342.7 569.8h0M342.7 572.9h0M275.0 599.3h0M275.0 586.6h0M275.0 590.9h0M275.0 587.9h0M372.3 565.8h0M372.3 554.5h0M372.3 567.4h0M372.3 557.9h0M277.6 616.1h0M277.6 624.7h0M277.6 619.9h0M277.6 624.8h0M308.4 611.4h0M308.4 620.9h0M308.4 606.3h0M308.4 619.2h0M355.2 583.9h0M355.2 582.2h0M355.2 589.7h0M355.2 571.2h0M300.6 592.8h0M300.6 604.7h0M300.6 590.2h0M300.6 593.0h0M373.1 582.2h0M373.1 582.2h0M373.1 570.0h0M373.1 580.9h0M373.7 566.7h0M373.7 566.9h0M373.7 580.6h0M373.7 580.6h0M370.2 591.0h0M370.2 591.0h0M370.2 588.7h0M370.2 582.6h0M335.9 577.1h0M335.9 578.0h0M335.9 586.3h0M335.9 584.3h0M349.5 589.6h0M349.5 587.6h0M349.5 599.3h0M349.5 587.8h0M363.7 557.1h0M363.7 574.4h0M363.7 559.6h0M363.7 564.7h0M370.7 572.1h0M370.7 580.6h0M370.7 569.6h0M370.7 572.1h0M354.3 566.3h0M354.3 556.7h0M354.3 559.0h0M354.3 561.7h0M354.8 573.9h0M354.8 582.6h0M354.8 571.7h0M354.8 574.3h0M342.5 590.2h0M342.5 584.4h0M342.5 569.8h0M342.5 580.5h0M272.4 628.8h0M272.4 625.4h0M272.4 629.4h0M272.4 625.9h0M364.0 574.2h0M364.0 566.0h0M364.0 569.2h0M364.0 580.3h0M286.5 566.3h0M286.5 582.4h0M286.5 577.3h0M286.5 580.3h0M380.3 561.5h0M380.3 556.8h0M380.3 570.3h0M380.3 561.7h0M379.9 583.8h0M379.9 568.9h0M379.9 567.8h0M379.9 570.5h0M373.4 593.8h0M373.4 587.4h0M373.4 584.7h0M373.4 590.6h0M316.5 604.0h0M316.5 594.4h0M316.5 587.5h0M316.5 606.1h0M345.7 590.4h0M345.7 597.2h0M345.7 594.5h0M345.7 581.8h0M345.3 571.9h0M345.3 579.9h0M345.3 578.7h0M345.3 591.8h0M319.3 583.0h0M319.3 589.5h0M319.3 586.8h0M319.3 585.9h0M300.7 590.3h0M300.7 593.5h0M300.7 585.0h0M300.7 582.0h0M364.7 579.7h0M364.7 593.3h0M364.7 587.9h0M364.7 580.0h0M252.7 627.6h0M252.7 636.4h0M252.7 636.4h0M252.7 629.7h0M327.9 601.0h0M327.9 583.5h0M327.9 592.9h0M327.9 595.7h0M252.8 620.4h0M252.8 631.1h0M252.8 634.2h0M252.8 632.1h0M344.3 588.3h0M344.3 580.3h0M344.3 583.6h0M344.3 583.4h0M361.9 573.3h0M361.9 569.8h0M361.9 578.1h0M361.9 572.5h0M257.2 601.6h0M257.2 612.6h0M257.2 613.1h0M257.2 620.0h0M358.7 576.1h0M358.7 581.1h0M358.7 578.0h0M358.7 573.6h0M323.1 604.7h0M323.1 603.6h0M323.1 609.0h0M323.1 598.0h0M310.7 561.0h0M310.7 564.6h0M310.7 556.6h0M310.7 569.1h0M272.6 598.1h0M272.6 576.5h0M272.6 590.0h0M272.6 576.7h0M305.0 573.8h0M305.0 565.9h0M305.0 589.5h0M305.0 588.2h0M380.8 553.6h0M380.8 533.2h0M380.8 537.0h0M380.8 548.3h0M304.9 593.8h0M304.9 601.3h0M304.9 598.0h0M304.9 593.2h0M320.0 610.1h0M320.0 608.3h0M320.0 606.0h0M320.0 612.2h0M254.9 613.5h0M254.9 619.3h0M254.9 604.6h0M254.9 616.2h0M317.4 568.6h0M317.4 575.0h0M317.4 568.4h0M317.4 574.2h0M273.3 624.0h0M273.3 618.8h0M273.3 628.6h0M273.3 630.1h0M379.8 547.4h0M379.8 561.2h0M379.8 562.4h0M379.8 548.1h0M358.6 594.6h0M358.6 579.3h0M358.6 583.2h0M358.6 581.0h0M291.0 568.0h0M291.0 573.4h0M291.0 574.8h0M291.0 575.5h0M288.4 612.4h0M288.4 606.9h0M288.4 602.9h0M288.4 617.6h0M247.3 596.7h0M247.3 613.0h0M247.3 597.1h0M247.3 613.0h0M275.5 603.4h0M275.5 616.9h0M275.5 605.2h0M275.5 597.7h0M264.6 586.1h0M264.6 586.7h0M264.6 596.3h0M264.6 596.9h0M298.1 615.8h0M298.1 607.1h0M298.1 618.2h0M298.1 606.1h0M298.6 625.2h0M298.6 619.5h0M298.6 616.0h0M298.6 613.1h0M350.8 575.5h0M350.8 561.2h0M350.8 573.8h0M350.8 558.6h0M256.1 596.1h0M256.1 599.3h0M256.1 601.4h0M256.1 603.7h0M292.8 608.2h0M292.8 602.9h0M292.8 605.4h0M292.8 607.9h0M248.0 606.8h0M248.0 601.8h0M248.0 597.0h0M248.0 604.6h0M351.9 595.8h0M351.9 585.1h0M351.9 589.9h0M351.9 584.2h0M340.7 575.8h0M340.7 580.3h0M340.7 582.4h0M340.7 575.9h0M270.8 610.9h0M270.8 613.5h0M270.8 609.7h0M270.8 617.0h0M305.5 608.3h0M305.5 597.7h0M305.5 613.9h0M305.5 605.0h0M360.4 578.3h0M360.4 565.2h0M360.4 578.0h0M360.4 576.5h0M290.4 566.9h0M290.4 583.1h0M290.4 564.2h0M290.4 568.1h0M288.7 621.3h0M288.7 636.3h0M288.7 619.6h0M288.7 625.0h0M269.3 586.4h0M269.3 578.0h0M269.3 583.7h0M269.3 584.4h0M363.0 592.5h0M363.0 578.4h0M363.0 585.2h0M363.0 588.7h0M344.6 581.0h0M344.6 583.9h0M344.6 573.6h0M344.6 573.1h0M339.3 580.0h0M339.3 588.0h0M339.3 585.2h0M339.3 584.2h0M274.6 592.9h0M274.6 598.8h0M274.6 598.1h0M274.6 595.8h0M264.1 621.5h0M264.1 621.0h0M264.1 615.4h0M264.1 613.4h0M373.3 554.7h0M373.3 575.5h0M373.3 563.0h0M373.3 566.0h0M371.9 553.6h0M371.9 541.3h0M371.9 546.2h0M371.9 558.9h0M331.6 588.4h0M331.6 585.4h0M331.6 592.8h0M331.6 582.7h0M261.8 612.1h0M261.8 596.1h0M261.8 607.7h0M261.8 604.3h0M338.1 562.9h0M338.1 568.7h0M338.1 561.2h0M338.1 556.6h0M320.4 571.7h0M320.4 575.8h0M320.4 580.7h0M320.4 580.0h0M249.2 608.6h0M249.2 617.7h0M249.2 620.7h0M249.2 615.5h0M351.3 568.7h0M351.3 551.5h0M351.3 550.6h0M351.3 560.6h0M279.4 620.3h0M279.4 630.2h0M279.4 607.0h0M279.4 620.4h0M337.0 577.4h0M337.0 574.4h0M337.0 575.0h0M337.0 570.2h0M302.3 594.6h0M302.3 587.9h0M302.3 588.6h0M302.3 580.9h0M315.3 587.3h0M315.3 585.0h0M315.3 578.7h0M315.3 586.0h0M263.8 611.3h0M263.8 621.4h0M263.8 614.5h0M263.8 599.1h0M358.4 568.5h0M358.4 565.3h0M358.4 561.7h0M358.4 569.5h0M259.4 654.4h0M259.4 639.3h0M259.4 649.7h0M259.4 653.3h0M339.5 592.7h0M339.5 599.8h0M339.5 589.0h0M339.5 608.5h0M277.1 622.9h0M277.1 612.3h0M277.1 620.0h0M277.1 611.9h0M343.8 580.9h0M343.8 587.6h0M343.8 590.1h0M343.8 594.6h0M327.8 581.3h0M327.8 584.8h0M327.8 602.0h0M327.8 597.9h0M334.6 568.4h0M334.6 575.4h0M334.6 569.2h0M334.6 568.0h0M277.4 603.5h0M277.4 611.6h0M277.4 602.6h0M277.4 611.0h0M371.0 569.3h0M371.0 559.0h0M371.0 560.5h0M371.0 565.9h0M293.9 606.9h0M293.9 607.8h0M293.9 602.5h0M293.9 616.0h0M298.1 610.0h0M298.1 608.1h0M298.1 605.0h0M298.1 610.3h0M377.5 579.3h0M377.5 572.7h0M377.5 588.9h0M377.5 572.8h0M363.0 562.8h0M363.0 566.1h0M363.0 578.2h0M363.0 568.9h0M309.0 580.3h0M309.0 572.4h0M309.0 569.9h0M309.0 575.5h0M273.9 600.8h0M273.9 612.5h0M273.9 607.1h0M273.9 608.7h0M320.9 573.8h0M320.9 569.3h0M320.9 574.2h0M320.9 579.8h0M325.7 597.9h0M325.7 609.0h0M325.7 600.9h0M325.7 604.2h0M367.0 574.2h0M367.0 579.7h0M367.0 564.6h0M367.0 577.9h0M261.4 609.0h0M261.4 618.5h0M261.4 620.2h0M261.4 612.2h0M291.0 590.0h0M291.0 603.5h0M291.0 594.4h0M291.0 588.1h0M354.3 573.0h0M354.3 560.0h0M354.3 560.9h0M354.3 564.5h0M330.7 594.4h0M330.7 603.4h0M330.7 589.3h0M330.7 589.1h0M264.1 615.5h0M264.1 616.1h0M264.1 624.3h0M264.1 610.5h0M251.6 608.0h0M251.6 604.0h0M251.6 610.7h0M251.6 598.5h0M342.8 584.0h0M342.8 579.0h0M342.8 564.2h0M342.8 573.4h0M253.7 600.9h0M253.7 599.0h0M253.7 599.4h0M253.7 608.1h0M316.2 576.9h0M316.2 575.7h0M316.2 572.1h0M316.2 578.4h0M352.2 555.1h0M352.2 562.3h0M352.2 569.1h0M352.2 572.6h0M280.0 604.5h0M280.0 589.5h0M280.0 608.3h0M280.0 589.3h0M320.9 596.1h0M320.9 589.9h0M320.9 599.1h0M320.9 580.9h0M310.2 617.3h0M310.2 617.4h0M310.2 620.3h0M310.2 612.4h0M270.7 601.9h0M270.7 612.7h0M270.7 597.8h0M270.7 599.6h0M256.2 621.6h0M256.2 610.1h0M256.2 604.9h0M256.2 612.5h0M359.7 587.1h0M359.7 579.4h0M359.7 575.2h0M359.7 582.7h0M374.0 564.5h0M374.0 571.0h0M374.0 580.7h0M374.0 582.8h0M319.2 589.9h0M319.2 591.8h0M319.2 594.5h0M319.2 588.6h0M367.5 594.5h0M367.5 592.6h0M367.5 575.6h0M367.5 590.5h0M368.7 558.3h0M368.7 556.3h0M368.7 554.1h0M368.7 549.1h0M323.0 614.8h0M323.0 607.0h0M323.0 613.6h0M323.0 598.6h0M357.4 569.8h0M357.4 580.2h0M357.4 570.9h0M357.4 576.0h0M345.8 557.2h0M345.8 570.4h0M345.8 557.2h0M345.8 561.2h0M257.5 610.9h0M257.5 607.4h0M257.5 604.3h0M257.5 611.0h0M284.4 597.4h0M284.4 598.3h0M284.4 608.5h0M284.4 605.7h0M376.7 577.3h0M376.7 572.3h0M376.7 562.4h0M376.7 569.8h0M376.6 541.1h0M376.6 550.4h0M376.6 551.2h0M376.6 559.9h0M275.9 629.3h0M275.9 619.6h0M275.9 630.8h0M275.9 623.2h0M302.7 595.4h0M302.7 584.2h0M302.7 596.9h0M302.7 593.1h0M315.5 578.2h0M315.5 570.2h0M315.5 572.0h0M315.5 570.1h0M272.9 597.4h0M272.9 609.6h0M272.9 603.2h0M272.9 594.7h0M309.2 581.4h0M309.2 589.3h0M309.2 579.1h0M309.2 589.0h0M271.7 586.7h0M271.7 596.6h0M271.7 599.3h0M271.7 595.7h0" stroke="#1f77b4" stroke-width="3.4" stroke-linecap="round" fill="none"/><polyline points="229.70,625.83 244.95,618.76" stroke="#3a87be" stroke-width="1" fill="none"/><path d="M222.40 517.00V679.50H388.20M219.60 522.60H222.40M217.80 530.45H222.40M219.60 538.30H222.40M219.60 546.15H222.40M219.60 554.00H222.40M219.60 561.85H222.40M217.80 569.70H222.40M219.60 577.55H222.40M219.60 585.40H222.40M219.60 593.25H222.40M219.60 601.10H222.40M217.80 608.95H222.40M219.60 616.80H222.40M219.60 624.65H222.40M219.60 632.50H222.40M219.60 640.35H222.40M217.80 648.20H222.40M219.60 656.05H222.40M219.60 663.90H222.40M219.60 671.75H222.40M223.60 679.50V682.80M229.70 679.50V684.50M235.80 679.50V682.80M241.90 679.50V682.80M248.00 679.50V682.80M254.10 679.50V682.80M260.20 679.50V684.50M266.30 679.50V682.80M272.40 679.50V682.80M278.50 679.50V682.80M284.60 679.50V682.80M290.70 679.50V684.50M296.80 679.50V682.80M302.90 679.50V682.80M309.00 679.50V682.80M315.10 679.50V682.80M321.20 679.50V684.50M327.30 679.50V682.80M333.40 679.50V682.80M339.50 679.50V682.80M345.60 679.50V682.80M351.70 679.50V684.50M357.80 679.50V682.80M363.90 679.50V682.80M370.00 679.50V682.80M376.10 679.50V682.80M382.20 679.50V684.50" stroke="#222" stroke-width="1.1" fill="none"/></svg>
<div class="t" style="left:182.40px;top:525.45px;width:31.00px;text-align:right;font-size:9px;color:#555;line-height:10px">30</div>
<div class="t" style="left:182.40px;top:564.70px;width:31.00px;text-align:right;font-size:9px;color:#555;line-height:10px">20</div>
<div class="t" style="left:182.40px;top:603.95px;width:31.00px;text-align:right;font-size:9px;color:#555;line-height:10px">10</div>
<div class="t" style="left:182.40px;top:643.20px;width:31.00px;text-align:right;font-size:9px;color:#555;line-height:10px">0</div>
<div class="t" style="left:209.70px;top:687.50px;width:40px;text-align:center;font-size:9px;color:#555;line-height:10px">0</div>
<div class="t" style="left:240.20px;top:687.50px;width:40px;text-align:center;font-size:9px;color:#555;line-height:10px">20</div>
<div class="t" style="left:270.70px;top:687.50px;width:40px;text-align:center;font-size:9px;color:#555;line-height:10px">40</div>
<div class="t" style="left:301.20px;top:687.50px;width:40px;text-align:center;font-size:9px;color:#555;line-height:10px">60</div>
<div class="t" style="left:331.70px;top:687.50px;width:40px;text-align:center;font-size:9px;color:#555;line-height:10px">80</div>
<div class="t" style="left:362.20px;top:687.50px;width:40px;text-align:center;font-size:9px;color:#555;line-height:10px">100</div>
<div class="t" style="left:422.95px;top:501.82px;font-size:10.25px;font-weight:bold;color:#444">Salt 2²</div>
<svg class="b" style="left:0;top:0" width="1200" height="696"><path d="M422.15 530.45H587.95M422.15 569.70H587.95M422.15 608.95H587.95M422.15 648.20H587.95M429.30 517.00V679.50M459.78 517.00V679.50M490.26 517.00V679.50M520.74 517.00V679.50M551.22 517.00V679.50M581.70 517.00V679.50M422.15 517.50H587.95M587.45 517.00V679.50" stroke="#e8e8e8" stroke-width="1" fill="none"/><path d="M454.4 626.6h0M454.4 610.7h0M454.4 610.3h0M454.4 618.4h0M506.3 610.8h0M506.3 632.1h0M506.3 606.9h0M506.3 620.7h0M451.4 620.5h0M451.4 605.2h0M451.4 611.3h0M451.4 621.3h0M496.6 617.7h0M496.6 613.4h0M496.6 614.7h0M496.6 606.7h0M542.2 595.9h0M542.2 613.7h0M542.2 603.7h0M542.2 610.0h0M435.0 590.2h0M435.0 592.1h0M435.0 599.1h0M435.0 604.0h0M574.0 622.9h0M574.0 625.9h0M574.0 631.6h0M574.0 616.2h0M485.0 625.3h0M485.0 619.8h0M485.0 624.7h0M485.0 619.3h0M453.5 622.3h0M453.5 628.5h0M453.5 626.8h0M453.5 627.3h0M446.5 619.8h0M446.5 620.0h0M446.5 616.8h0M446.5 602.3h0M466.8 527.2h0M466.8 530.8h0M466.8 537.9h0M466.8 535.7h0M575.3 599.1h0M575.3 604.2h0M575.3 602.4h0M575.3 603.4h0M506.4 574.7h0M506.4 579.1h0M506.4 575.4h0M506.4 581.4h0M473.2 586.8h0M473.2 587.3h0M473.2 585.8h0M473.2 579.6h0M527.7 555.4h0M527.7 559.1h0M527.7 553.7h0M527.7 546.9h0M433.6 561.1h0M433.6 569.5h0M433.6 562.6h0M433.6 561.0h0M503.1 567.4h0M503.1 576.4h0M503.1 564.1h0M503.1 565.1h0M432.9 557.5h0M432.9 559.6h0M432.9 554.1h0M432.9 552.4h0M575.4 609.8h0M575.4 610.7h0M575.4 611.1h0M575.4 615.2h0M529.2 573.3h0M529.2 556.5h0M529.2 578.7h0M529.2 560.3h0M457.0 575.4h0M457.0 584.9h0M457.0 593.8h0M457.0 595.7h0M570.9 638.7h0M570.9 636.0h0M570.9 636.2h0M570.9 640.4h0M467.8 563.1h0M467.8 552.8h0M467.8 550.0h0M467.8 546.8h0M504.0 569.7h0M504.0 568.2h0M504.0 572.1h0M504.0 570.7h0M473.7 549.1h0M473.7 547.8h0M473.7 554.5h0M473.7 561.8h0M440.9 603.9h0M440.9 604.1h0M440.9 588.6h0M440.9 597.0h0M532.9 578.1h0M532.9 577.8h0M532.9 581.2h0M532.9 570.4h0M471.3 608.5h0M471.3 614.2h0M471.3 606.8h0M471.3 601.1h0M525.6 582.8h0M525.6 589.7h0M525.6 577.6h0M525.6 582.2h0M523.7 557.9h0M523.7 546.6h0M523.7 564.9h0M523.7 552.7h0M576.2 584.9h0M576.2 581.4h0M576.2 595.5h0M576.2 585.2h0M523.8 585.9h0M523.8 592.6h0M523.8 573.8h0M523.8 575.7h0M460.7 568.7h0M460.7 573.7h0M460.7 572.3h0M460.7 567.3h0M576.7 570.3h0M576.7 561.4h0M576.7 571.7h0M576.7 574.6h0M490.5 600.1h0M490.5 593.8h0M490.5 591.1h0M490.5 597.2h0M434.5 551.8h0M434.5 558.3h0M434.5 550.9h0M434.5 557.1h0M465.9 569.2h0M465.9 563.9h0M465.9 568.6h0M465.9 568.3h0M516.3 605.7h0M516.3 604.1h0M516.3 601.3h0M516.3 597.8h0M463.6 585.4h0M463.6 586.8h0M463.6 585.9h0M463.6 576.2h0M458.0 595.2h0M458.0 587.4h0M458.0 594.6h0M458.0 589.1h0M532.3 576.3h0M532.3 584.7h0M532.3 573.6h0M532.3 580.2h0M507.3 600.2h0M507.3 591.9h0M507.3 592.1h0M507.3 589.3h0M549.6 609.8h0M549.6 605.2h0M549.6 615.5h0M549.6 620.3h0M509.2 564.5h0M509.2 558.5h0M509.2 572.6h0M509.2 562.6h0M525.8 561.1h0M525.8 573.7h0M525.8 560.2h0M525.8 563.0h0M437.8 593.8h0M437.8 601.1h0M437.8 588.2h0M437.8 605.2h0M431.0 566.5h0M431.0 564.8h0M431.0 569.9h0M431.0 570.9h0M505.6 559.1h0M505.6 553.3h0M505.6 575.3h0M505.6 568.7h0M563.8 595.5h0M563.8 597.8h0M563.8 596.4h0M563.8 599.0h0M580.8 613.7h0M580.8 626.7h0M580.8 613.5h0M580.8 624.8h0M461.7 573.7h0M461.7 565.8h0M461.7 565.9h0M461.7 577.1h0M543.8 561.2h0M543.8 554.4h0M543.8 566.3h0M543.8 556.0h0M511.3 582.4h0M511.3 596.5h0M511.3 587.2h0M511.3 594.1h0M453.5 609.3h0M453.5 608.5h0M453.5 613.1h0M453.5 615.9h0M581.3 608.5h0M581.3 619.7h0M581.3 613.1h0M581.3 610.3h0M449.5 570.5h0M449.5 562.9h0M449.5 570.3h0M449.5 570.6h0M561.2 600.3h0M561.2 601.5h0M561.2 614.6h0M561.2 600.0h0M565.0 593.1h0M565.0 597.8h0M565.0 585.8h0M565.0 585.4h0M445.2 570.8h0M445.2 557.6h0M445.2 556.8h0M445.2 566.4h0M569.7 578.0h0M569.7 589.1h0M569.7 590.8h0M569.7 585.0h0M438.5 564.8h0M438.5 566.8h0M438.5 571.7h0M438.5 572.4h0M432.5 592.6h0M432.5 591.6h0M432.5 605.1h0M432.5 593.4h0M518.6 575.9h0M518.6 579.0h0M518.6 580.1h0M518.6 573.2h0M442.5 577.6h0M442.5 577.3h0M442.5 579.5h0M442.5 568.6h0M576.3 617.5h0M576.3 629.4h0M576.3 629.3h0M576.3 620.2h0M446.9 589.4h0M446.9 589.5h0M446.9 593.0h0M446.9 595.8h0M548.2 617.6h0M548.2 613.6h0M548.2 608.1h0M548.2 612.8h0M430.7 565.7h0M430.7 579.6h0M430.7 581.7h0M430.7 588.5h0M517.2 583.4h0M517.2 580.0h0M517.2 578.5h0M517.2 574.3h0M547.6 565.6h0M547.6 562.6h0M547.6 566.9h0M547.6 554.1h0M488.6 553.3h0M488.6 550.3h0M488.6 552.0h0M488.6 552.2h0M476.3 616.9h0M476.3 606.4h0M476.3 614.1h0M476.3 616.8h0M555.4 604.7h0M555.4 605.1h0M555.4 601.6h0M555.4 597.2h0M479.6 570.4h0M479.6 571.7h0M479.6 574.3h0M479.6 570.6h0M454.5 583.8h0M454.5 575.2h0M454.5 596.5h0M454.5 584.7h0M458.2 555.6h0M458.2 559.7h0M458.2 559.3h0M458.2 541.4h0M451.5 578.5h0M451.5 569.7h0M451.5 575.4h0M451.5 587.0h0M489.6 568.7h0M489.6 574.6h0M489.6 561.8h0M489.6 573.5h0M447.8 605.1h0M447.8 590.5h0M447.8 598.8h0M447.8 600.1h0M529.1 587.6h0M529.1 567.2h0M529.1 576.1h0M529.1 584.6h0M538.0 612.2h0M538.0 617.2h0M538.0 614.4h0M538.0 616.7h0M528.8 573.6h0M528.8 565.0h0M528.8 568.7h0M528.8 571.3h0M536.3 601.3h0M536.3 600.8h0M536.3 607.8h0M536.3 608.9h0M525.3 566.6h0M525.3 567.4h0M525.3 560.8h0M525.3 548.0h0M481.2 603.0h0M481.2 595.4h0M481.2 593.7h0M481.2 588.1h0M464.6 568.7h0M464.6 580.9h0M464.6 568.5h0M464.6 564.4h0M570.8 623.2h0M570.8 627.0h0M570.8 632.3h0M570.8 624.7h0M435.6 561.8h0M435.6 554.7h0M435.6 571.2h0M435.6 554.3h0M442.1 578.1h0M442.1 579.6h0M442.1 584.4h0M442.1 592.3h0M568.2 598.6h0M568.2 609.7h0M568.2 593.3h0M568.2 613.3h0M567.9 594.0h0M567.9 593.7h0M567.9 589.2h0M567.9 598.3h0M574.2 639.9h0M574.2 641.9h0M574.2 633.5h0M574.2 646.6h0M503.8 547.4h0M503.8 551.9h0M503.8 556.8h0M503.8 540.5h0M491.9 591.3h0M491.9 585.2h0M491.9 589.4h0M491.9 574.8h0M507.1 612.1h0M507.1 608.8h0M507.1 600.1h0M507.1 606.5h0M471.9 569.8h0M471.9 572.7h0M471.9 575.4h0M471.9 574.6h0M544.0 574.7h0M544.0 590.2h0M544.0 582.5h0M544.0 570.8h0M556.2 616.7h0M556.2 606.2h0M556.2 609.7h0M556.2 605.0h0M527.3 569.2h0M527.3 550.8h0M527.3 554.9h0M527.3 562.1h0M506.5 560.9h0M506.5 562.2h0M506.5 542.9h0M506.5 555.0h0M523.4 581.7h0M523.4 583.8h0M523.4 576.3h0M523.4 579.1h0M571.3 580.5h0M571.3 571.7h0M571.3 570.4h0M571.3 573.5h0M486.3 589.9h0M486.3 588.8h0M486.3 584.8h0M486.3 578.5h0M529.2 606.6h0M529.2 603.3h0M529.2 613.6h0M529.2 603.5h0M521.5 550.1h0M521.5 558.6h0M521.5 545.3h0M521.5 549.9h0M554.4 612.2h0M554.4 627.9h0M554.4 607.1h0M554.4 604.4h0M524.7 589.6h0M524.7 604.0h0M524.7 591.0h0M524.7 596.7h0M446.6 578.5h0M446.6 586.3h0M446.6 588.5h0M446.6 595.7h0M540.6 568.5h0M540.6 582.2h0M540.6 567.6h0M540.6 566.1h0M483.8 589.6h0M483.8 593.4h0M483.8 606.1h0M483.8 598.1h0M502.3 569.2h0M502.3 569.4h0M502.3 557.0h0M502.3 551.2h0M469.7 568.3h0M469.7 559.4h0M469.7 571.8h0M469.7 569.2h0M541.6 573.6h0M541.6 565.8h0M541.6 582.1h0M541.6 575.4h0M544.6 559.4h0M544.6 560.2h0M544.6 570.6h0M544.6 570.6h0M447.2 614.4h0M447.2 607.9h0M447.2 623.9h0M447.2 614.3h0M548.5 601.7h0M548.5 596.9h0M548.5 600.9h0M548.5 603.5h0M512.9 605.3h0M512.9 606.0h0M512.9 609.6h0M512.9 604.0h0M576.1 590.7h0M576.1 584.3h0M576.1 593.2h0M576.1 583.2h0M528.1 589.6h0M528.1 600.7h0M528.1 598.2h0M528.1 604.1h0M443.5 593.6h0M443.5 608.7h0M443.5 591.0h0M443.5 598.9h0M569.2 594.4h0M569.2 585.2h0M569.2 596.6h0M569.2 595.6h0M434.3 574.8h0M434.3 569.5h0M434.3 570.7h0M434.3 557.8h0M568.0 589.1h0M568.0 580.7h0M568.0 574.8h0M568.0 579.6h0M565.8 578.3h0M565.8 588.5h0M565.8 577.3h0M565.8 574.5h0M433.1 594.0h0M433.1 601.5h0M433.1 614.6h0M433.1 607.8h0M467.5 550.3h0M467.5 562.4h0M467.5 564.5h0M467.5 553.8h0M429.4 611.1h0M429.4 609.0h0M429.4 597.4h0M429.4 601.4h0M572.5 580.1h0M572.5 579.3h0M572.5 574.4h0M572.5 580.9h0M463.4 557.5h0M463.4 565.3h0M463.4 563.1h0M463.4 557.7h0M531.6 582.0h0M531.6 574.2h0M531.6 577.0h0M531.6 568.9h0M558.5 613.8h0M558.5 611.6h0M558.5 617.2h0M558.5 613.0h0M462.9 549.4h0M462.9 538.5h0M462.9 545.3h0M462.9 547.2h0M499.5 622.2h0M499.5 627.8h0M499.5 617.9h0M499.5 622.7h0M451.8 594.3h0M451.8 589.9h0M451.8 599.5h0M451.8 595.2h0M494.3 592.6h0M494.3 593.6h0M494.3 586.7h0M494.3 594.8h0M540.2 619.0h0M540.2 601.0h0M540.2 603.5h0M540.2 611.8h0M463.2 542.6h0M463.2 542.1h0M463.2 548.0h0M463.2 545.5h0M564.1 639.2h0M564.1 652.3h0M564.1 652.3h0M564.1 646.9h0M578.8 603.3h0M578.8 611.8h0M578.8 611.3h0M578.8 603.2h0M511.1 579.3h0M511.1 579.0h0M511.1 578.3h0M511.1 578.3h0M446.8 609.1h0M446.8 595.3h0M446.8 598.9h0M446.8 602.9h0M533.1 563.3h0M533.1 563.2h0M533.1 558.9h0M533.1 561.2h0M504.1 545.4h0M504.1 549.1h0M504.1 555.0h0M504.1 550.2h0M515.5 572.2h0M515.5 572.1h0M515.5 572.7h0M515.5 586.9h0M560.9 591.8h0M560.9 598.4h0M560.9 600.2h0M560.9 606.9h0M493.6 601.4h0M493.6 582.5h0M493.6 580.3h0M493.6 579.8h0M499.3 570.2h0M499.3 585.9h0M499.3 581.2h0M499.3 589.2h0M434.9 595.3h0M434.9 583.4h0M434.9 575.9h0M434.9 593.4h0M558.4 616.9h0M558.4 616.9h0M558.4 627.3h0M558.4 629.9h0M448.2 609.3h0M448.2 610.4h0M448.2 610.7h0M448.2 604.3h0M568.7 639.3h0M568.7 642.5h0M568.7 640.5h0M568.7 628.2h0M441.5 621.6h0M441.5 624.0h0M441.5 612.2h0M441.5 617.6h0M505.6 577.7h0M505.6 580.2h0M505.6 585.7h0M505.6 579.7h0M432.8 572.0h0M432.8 578.1h0M432.8 578.1h0M432.8 569.4h0M453.5 569.7h0M453.5 585.0h0M453.5 572.4h0M453.5 569.7h0M569.2 582.7h0M569.2 578.2h0M569.2 584.0h0M569.2 584.5h0M527.0 579.9h0M527.0 574.8h0M527.0 583.1h0M527.0 578.8h0M580.8 592.2h0M580.8 575.6h0M580.8 587.2h0M580.8 587.9h0M524.9 570.2h0M524.9 560.6h0M524.9 560.5h0M524.9 559.4h0M500.7 579.3h0M500.7 575.0h0M500.7 572.3h0M500.7 564.4h0M450.6 571.7h0M450.6 590.4h0M450.6 583.9h0M450.6 580.6h0M559.0 610.9h0M559.0 609.6h0M559.0 605.6h0M559.0 606.2h0M570.5 605.0h0M570.5 615.9h0M570.5 613.5h0M570.5 598.7h0M529.7 598.5h0M529.7 592.5h0M529.7 601.1h0M529.7 590.5h0M451.3 564.1h0M451.3 559.3h0M451.3 551.1h0M451.3 562.8h0M534.1 592.1h0M534.1 588.7h0M534.1 592.3h0M534.1 589.8h0M434.7 606.0h0M434.7 606.6h0M434.7 604.8h0M434.7 603.8h0M434.4 571.5h0M434.4 574.7h0M434.4 557.5h0M434.4 566.1h0M555.2 573.3h0M555.2 581.8h0M555.2 582.5h0M555.2 574.0h0M505.2 570.8h0M505.2 568.6h0M505.2 572.8h0M505.2 577.6h0M489.0 555.1h0M489.0 560.3h0M489.0 574.2h0M489.0 562.3h0M579.9 622.0h0M579.9 615.0h0M579.9 598.4h0M579.9 600.1h0M497.6 561.8h0M497.6 565.4h0M497.6 559.0h0M497.6 553.2h0M543.5 593.4h0M543.5 604.0h0M543.5 595.7h0M543.5 582.5h0M465.6 569.0h0M465.6 572.1h0M465.6 557.6h0M465.6 574.8h0M559.8 621.8h0M559.8 639.7h0M559.8 636.4h0M559.8 638.5h0M481.6 575.7h0M481.6 565.8h0M481.6 570.1h0M481.6 567.2h0M453.3 599.7h0M453.3 592.9h0M453.3 585.1h0M453.3 587.6h0M565.3 611.9h0M565.3 609.1h0M565.3 619.9h0M565.3 610.4h0M542.0 590.3h0M542.0 585.3h0M542.0 605.5h0M542.0 595.5h0M554.8 586.5h0M554.8 582.9h0M554.8 583.0h0M554.8 576.6h0M463.0 565.9h0M463.0 571.3h0M463.0 562.7h0M463.0 577.8h0M458.5 610.8h0M458.5 614.0h0M458.5 603.2h0M458.5 615.3h0M566.5 587.2h0M566.5 584.2h0M566.5 579.8h0M566.5 576.9h0M501.0 576.4h0M501.0 561.9h0M501.0 567.3h0M501.0 567.5h0M572.1 637.1h0M572.1 643.4h0M572.1 625.0h0M572.1 621.7h0M530.4 569.2h0M530.4 588.7h0M530.4 570.2h0M530.4 580.6h0M563.2 611.8h0M563.2 618.1h0M563.2 628.6h0M563.2 620.8h0M546.0 594.2h0M546.0 605.1h0M546.0 596.3h0M546.0 594.2h0M500.2 594.5h0M500.2 592.9h0M500.2 608.0h0M500.2 598.2h0M446.1 586.3h0M446.1 575.0h0M446.1 577.7h0M446.1 580.8h0M573.2 591.1h0M573.2 598.0h0M573.2 582.7h0M573.2 586.4h0M560.0 627.7h0M560.0 622.7h0M560.0 617.9h0M560.0 624.5h0M517.4 594.6h0M517.4 600.0h0M517.4 593.2h0M517.4 601.7h0M520.3 599.3h0M520.3 590.3h0M520.3 599.2h0M520.3 608.2h0M470.0 610.5h0M470.0 620.4h0M470.0 599.4h0M470.0 615.5h0M454.6 614.0h0M454.6 623.3h0M454.6 618.3h0M454.6 624.8h0M487.5 607.8h0M487.5 603.1h0M487.5 594.2h0M487.5 593.4h0M483.9 616.7h0M483.9 611.6h0M483.9 603.6h0M483.9 615.4h0M549.2 620.9h0M549.2 621.9h0M549.2 615.5h0M549.2 630.1h0M542.6 623.6h0M542.6 607.0h0M542.6 612.3h0M542.6 614.2h0M461.1 617.9h0M461.1 612.1h0M461.1 606.1h0M461.1 614.4h0M524.8 601.2h0M524.8 597.1h0M524.8 587.2h0M524.8 598.9h0M452.1 562.7h0M452.1 564.2h0M452.1 583.1h0M452.1 578.3h0M478.7 589.0h0M478.7 570.8h0M478.7 576.8h0M478.7 574.6h0M467.5 576.4h0M467.5 562.8h0M467.5 559.7h0M467.5 564.8h0M509.5 533.9h0M509.5 537.6h0M509.5 549.2h0M509.5 535.6h0M529.8 597.7h0M529.8 612.4h0M529.8 610.5h0M529.8 607.9h0M436.8 614.0h0M436.8 611.6h0M436.8 604.0h0M436.8 607.3h0M512.9 557.2h0M512.9 556.0h0M512.9 569.9h0M512.9 555.2h0M536.6 601.3h0M536.6 590.5h0M536.6 593.1h0M536.6 595.2h0M505.2 563.1h0M505.2 547.9h0M505.2 564.2h0M505.2 550.6h0M570.7 596.3h0M570.7 597.2h0M570.7 598.2h0M570.7 598.7h0M556.7 612.4h0M556.7 608.7h0M556.7 605.8h0M556.7 611.5h0M438.6 560.8h0M438.6 565.6h0M438.6 558.9h0M438.6 554.5h0M502.1 585.8h0M502.1 580.5h0M502.1 572.8h0M502.1 570.2h0M536.9 625.9h0M536.9 607.6h0M536.9 612.6h0M536.9 624.6h0M469.8 577.4h0M469.8 579.1h0M469.8 581.2h0M469.8 578.6h0M562.2 589.3h0M562.2 604.6h0M562.2 596.5h0M562.2 597.1h0M569.5 605.8h0M569.5 595.3h0M569.5 601.0h0M569.5 597.2h0M496.6 565.9h0M496.6 565.2h0M496.6 575.9h0M496.6 576.4h0M499.2 559.0h0M499.2 551.6h0M499.2 561.0h0M499.2 555.9h0M449.9 612.8h0M449.9 627.4h0M449.9 614.9h0M449.9 621.8h0M546.1 632.2h0M546.1 632.2h0M546.1 620.6h0M546.1 625.5h0M440.8 563.2h0M440.8 568.3h0M440.8 574.6h0M440.8 566.7h0M565.3 614.8h0M565.3 618.0h0M565.3 619.1h0M565.3 614.0h0M560.4 605.7h0M560.4 603.5h0M560.4 597.6h0M560.4 603.9h0M458.2 586.3h0M458.2 580.4h0M458.2 574.9h0M458.2 574.5h0M447.7 578.0h0M447.7 581.9h0M447.7 585.6h0M447.7 571.9h0M492.1 553.3h0M492.1 563.3h0M492.1 557.4h0M492.1 542.2h0M548.7 604.1h0M548.7 610.2h0M548.7 597.6h0M548.7 607.5h0M486.1 586.1h0M486.1 590.1h0M486.1 585.1h0M486.1 591.2h0M492.3 588.8h0M492.3 584.1h0M492.3 597.0h0M492.3 593.1h0M466.9 599.8h0M466.9 590.1h0M466.9 589.1h0M466.9 594.7h0M453.5 607.0h0M453.5 616.7h0M453.5 613.1h0M453.5 611.0h0M581.3 618.5h0M581.3 624.1h0M581.3 616.9h0M581.3 625.4h0M440.1 592.0h0M440.1 579.9h0M440.1 583.2h0M440.1 578.2h0M580.7 592.7h0M580.7 589.7h0M580.7 582.6h0M580.7 591.0h0M551.9 560.2h0M551.9 568.9h0M551.9 570.2h0M551.9 563.8h0M535.1 618.8h0M535.1 607.0h0M535.1 616.1h0M535.1 610.6h0M441.8 562.6h0M441.8 571.7h0M441.8 565.3h0M441.8 576.0h0M568.1 610.2h0M568.1 612.1h0M568.1 614.0h0M568.1 610.0h0M547.0 564.1h0M547.0 566.4h0M547.0 571.1h0M547.0 563.6h0M448.3 607.1h0M448.3 597.9h0M448.3 598.5h0M448.3 609.8h0M558.0 590.1h0M558.0 571.4h0M558.0 578.2h0M558.0 583.4h0M436.7 575.5h0M436.7 574.9h0M436.7 576.9h0M436.7 578.7h0M434.2 583.8h0M434.2 583.2h0M434.2 576.6h0M434.2 582.7h0M498.2 573.1h0M498.2 579.7h0M498.2 569.3h0M498.2 571.3h0M500.1 580.0h0M500.1 570.3h0M500.1 569.8h0M500.1 572.9h0M504.5 599.3h0M504.5 586.6h0M504.5 590.9h0M504.5 587.9h0M491.0 565.8h0M491.0 554.5h0M491.0 567.4h0M491.0 557.9h0M577.3 616.1h0M577.3 624.7h0M577.3 619.9h0M577.3 624.8h0M574.3 611.4h0M574.3 620.9h0M574.3 606.3h0M574.3 619.2h0M572.5 583.9h0M572.5 582.2h0M572.5 589.7h0M572.5 571.2h0M512.4 592.8h0M512.4 604.7h0M512.4 590.2h0M512.4 593.0h0M470.0 582.2h0M470.0 582.2h0M470.0 570.0h0M470.0 580.9h0M445.4 566.7h0M445.4 566.9h0M445.4 580.6h0M445.4 580.6h0M574.8 591.0h0M574.8 591.0h0M574.8 588.7h0M574.8 582.6h0M519.6 577.1h0M519.6 578.0h0M519.6 586.3h0M519.6 584.3h0M533.6 589.6h0M533.6 587.6h0M533.6 599.3h0M533.6 587.8h0M511.6 557.1h0M511.6 574.4h0M511.6 559.6h0M511.6 564.7h0M531.1 572.1h0M531.1 580.6h0M531.1 569.6h0M531.1 572.1h0M435.0 566.3h0M435.0 556.7h0M435.0 559.0h0M435.0 561.7h0M509.5 573.9h0M509.5 582.6h0M509.5 571.7h0M509.5 574.3h0M512.9 590.2h0M512.9 584.4h0M512.9 569.8h0M512.9 580.5h0M563.1 628.8h0M563.1 625.4h0M563.1 629.4h0M563.1 625.9h0M451.8 574.2h0M451.8 566.0h0M451.8 569.2h0M451.8 580.3h0M481.9 566.3h0M481.9 582.4h0M481.9 577.3h0M481.9 580.3h0M524.8 561.5h0M524.8 556.8h0M524.8 570.3h0M524.8 561.7h0M475.7 583.8h0M475.7 568.9h0M475.7 567.8h0M475.7 570.5h0M555.8 593.8h0M555.8 587.4h0M555.8 584.7h0M555.8 590.6h0M529.1 604.0h0M529.1 594.4h0M529.1 587.5h0M529.1 606.1h0M538.8 590.4h0M538.8 597.2h0M538.8 594.5h0M538.8 581.8h0M473.6 571.9h0M473.6 579.9h0M473.6 578.7h0M473.6 591.8h0M507.4 583.0h0M507.4 589.5h0M507.4 586.8h0M507.4 585.9h0M449.4 590.3h0M449.4 593.5h0M449.4 585.0h0M449.4 582.0h0M556.7 579.7h0M556.7 593.3h0M556.7 587.9h0M556.7 580.0h0M439.8 627.6h0M439.8 636.4h0M439.8 636.4h0M439.8 629.7h0M439.3 601.0h0M439.3 583.5h0M439.3 592.9h0M439.3 595.7h0M450.7 620.4h0M450.7 631.1h0M450.7 634.2h0M450.7 632.1h0M545.2 588.3h0M545.2 580.3h0M545.2 583.6h0M545.2 583.4h0M435.0 573.3h0M435.0 569.8h0M435.0 578.1h0M435.0 572.5h0M534.5 601.6h0M534.5 612.6h0M534.5 613.1h0M534.5 620.0h0M513.9 576.1h0M513.9 581.1h0M513.9 578.0h0M513.9 573.6h0M577.5 604.7h0M577.5 603.6h0M577.5 609.0h0M577.5 598.0h0M470.4 561.0h0M470.4 564.6h0M470.4 556.6h0M470.4 569.1h0M449.5 598.1h0M449.5 576.5h0M449.5 590.0h0M449.5 576.7h0M510.3 573.8h0M510.3 565.9h0M510.3 589.5h0M510.3 588.2h0M486.9 553.6h0M486.9 533.2h0M486.9 537.0h0M486.9 548.3h0M512.7 593.8h0M512.7 601.3h0M512.7 598.0h0M512.7 593.2h0M560.4 610.1h0M560.4 608.3h0M560.4 606.0h0M560.4 612.2h0M569.6 613.5h0M569.6 619.3h0M569.6 604.6h0M569.6 616.2h0M516.0 568.6h0M516.0 575.0h0M516.0 568.4h0M516.0 574.2h0M578.5 624.0h0M578.5 618.8h0M578.5 628.6h0M578.5 630.1h0M515.5 547.4h0M515.5 561.2h0M515.5 562.4h0M515.5 548.1h0M441.6 594.6h0M441.6 579.3h0M441.6 583.2h0M441.6 581.0h0M463.0 568.0h0M463.0 573.4h0M463.0 574.8h0M463.0 575.5h0M448.1 612.4h0M448.1 606.9h0M448.1 602.9h0M448.1 617.6h0M529.5 596.7h0M529.5 613.0h0M529.5 597.1h0M529.5 613.0h0M456.8 603.4h0M456.8 616.9h0M456.8 605.2h0M456.8 597.7h0M464.8 586.1h0M464.8 586.7h0M464.8 596.3h0M464.8 596.9h0M460.0 615.8h0M460.0 607.1h0M460.0 618.2h0M460.0 606.1h0M568.1 625.2h0M568.1 619.5h0M568.1 616.0h0M568.1 613.1h0M548.2 575.5h0M548.2 561.2h0M548.2 573.8h0M548.2 558.6h0M523.8 596.1h0M523.8 599.3h0M523.8 601.4h0M523.8 603.7h0M548.5 608.2h0M548.5 602.9h0M548.5 605.4h0M548.5 607.9h0M436.2 606.8h0M436.2 601.8h0M436.2 597.0h0M436.2 604.6h0M581.4 595.8h0M581.4 585.1h0M581.4 589.9h0M581.4 584.2h0M556.1 575.8h0M556.1 580.3h0M556.1 582.4h0M556.1 575.9h0M430.5 610.9h0M430.5 613.5h0M430.5 609.7h0M430.5 617.0h0M430.6 608.3h0M430.6 597.7h0M430.6 613.9h0M430.6 605.0h0M453.6 578.3h0M453.6 565.2h0M453.6 578.0h0M453.6 576.5h0M468.6 566.9h0M468.6 583.1h0M468.6 564.2h0M468.6 568.1h0M580.4 621.3h0M580.4 636.3h0M580.4 619.6h0M580.4 625.0h0M505.4 586.4h0M505.4 578.0h0M505.4 583.7h0M505.4 584.4h0M565.4 592.5h0M565.4 578.4h0M565.4 585.2h0M565.4 588.7h0M499.9 581.0h0M499.9 583.9h0M499.9 573.6h0M499.9 573.1h0M579.7 580.0h0M579.7 588.0h0M579.7 585.2h0M579.7 584.2h0M458.9 592.9h0M458.9 598.8h0M458.9 598.1h0M458.9 595.8h0M533.9 621.5h0M533.9 621.0h0M533.9 615.4h0M533.9 613.4h0M473.5 554.7h0M473.5 575.5h0M473.5 563.0h0M473.5 566.0h0M494.8 553.6h0M494.8 541.3h0M494.8 546.2h0M494.8 558.9h0M520.8 588.4h0M520.8 585.4h0M520.8 592.8h0M520.8 582.7h0M503.1 612.1h0M503.1 596.1h0M503.1 607.7h0M503.1 604.3h0M478.6 562.9h0M478.6 568.7h0M478.6 561.2h0M478.6 556.6h0M442.9 571.7h0M442.9 575.8h0M442.9 580.7h0M442.9 580.0h0M559.7 608.6h0M559.7 617.7h0M559.7 620.7h0M559.7 615.5h0M469.8 568.7h0M469.8 551.5h0M469.8 550.6h0M469.8 560.6h0M553.6 620.3h0M553.6 630.2h0M553.6 607.0h0M553.6 620.4h0M513.8 577.4h0M513.8 574.4h0M513.8 575.0h0M513.8 570.2h0M506.8 594.6h0M506.8 587.9h0M506.8 588.6h0M506.8 580.9h0M573.6 587.3h0M573.6 585.0h0M573.6 578.7h0M573.6 586.0h0M461.3 611.3h0M461.3 621.4h0M461.3 614.5h0M461.3 599.1h0M477.5 568.5h0M477.5 565.3h0M477.5 561.7h0M477.5 569.5h0M560.7 654.4h0M560.7 639.3h0M560.7 649.7h0M560.7 653.3h0M560.1 592.7h0M560.1 599.8h0M560.1 589.0h0M560.1 608.5h0M451.5 622.9h0M451.5 612.3h0M451.5 620.0h0M451.5 611.9h0M450.1 580.9h0M450.1 587.6h0M450.1 590.1h0M450.1 594.6h0M485.4 581.3h0M485.4 584.8h0M485.4 602.0h0M485.4 597.9h0M513.6 568.4h0M513.6 575.4h0M513.6 569.2h0M513.6 568.0h0M449.2 603.5h0M449.2 611.6h0M449.2 602.6h0M449.2 611.0h0M556.0 569.3h0M556.0 559.0h0M556.0 560.5h0M556.0 565.9h0M450.2 606.9h0M450.2 607.8h0M450.2 602.5h0M450.2 616.0h0M455.5 610.0h0M455.5 608.1h0M455.5 605.0h0M455.5 610.3h0M550.8 579.3h0M550.8 572.7h0M550.8 588.9h0M550.8 572.8h0M501.4 562.8h0M501.4 566.1h0M501.4 578.2h0M501.4 568.9h0M465.7 580.3h0M465.7 572.4h0M465.7 569.9h0M465.7 575.5h0M444.5 600.8h0M444.5 612.5h0M444.5 607.1h0M444.5 608.7h0M463.7 573.8h0M463.7 569.3h0M463.7 574.2h0M463.7 579.8h0M563.9 597.9h0M563.9 609.0h0M563.9 600.9h0M563.9 604.2h0M458.9 574.2h0M458.9 579.7h0M458.9 564.6h0M458.9 577.9h0M443.2 609.0h0M443.2 618.5h0M443.2 620.2h0M443.2 612.2h0M481.7 590.0h0M481.7 603.5h0M481.7 594.4h0M481.7 588.1h0M488.8 573.0h0M488.8 560.0h0M488.8 560.9h0M488.8 564.5h0M538.8 594.4h0M538.8 603.4h0M538.8 589.3h0M538.8 589.1h0M540.3 615.5h0M540.3 616.1h0M540.3 624.3h0M540.3 610.5h0M503.0 608.0h0M503.0 604.0h0M503.0 610.7h0M503.0 598.5h0M580.7 584.0h0M580.7 579.0h0M580.7 564.2h0M580.7 573.4h0M523.1 600.9h0M523.1 599.0h0M523.1 599.4h0M523.1 608.1h0M508.0 576.9h0M508.0 575.7h0M508.0 572.1h0M508.0 578.4h0M497.8 555.1h0M497.8 562.3h0M497.8 569.1h0M497.8 572.6h0M504.9 604.5h0M504.9 589.5h0M504.9 608.3h0M504.9 589.3h0M568.8 596.1h0M568.8 589.9h0M568.8 599.1h0M568.8 580.9h0M562.3 617.3h0M562.3 617.4h0M562.3 620.3h0M562.3 612.4h0M465.0 601.9h0M465.0 612.7h0M465.0 597.8h0M465.0 599.6h0M495.4 621.6h0M495.4 610.1h0M495.4 604.9h0M495.4 612.5h0M523.5 587.1h0M523.5 579.4h0M523.5 575.2h0M523.5 582.7h0M433.3 564.5h0M433.3 571.0h0M433.3 580.7h0M433.3 582.8h0M533.1 589.9h0M533.1 591.8h0M533.1 594.5h0M533.1 588.6h0M564.0 594.5h0M564.0 592.6h0M564.0 575.6h0M564.0 590.5h0M435.1 558.3h0M435.1 556.3h0M435.1 554.1h0M435.1 549.1h0M437.1 614.8h0M437.1 607.0h0M437.1 613.6h0M437.1 598.6h0M544.6 569.8h0M544.6 580.2h0M544.6 570.9h0M544.6 576.0h0M531.9 557.2h0M531.9 570.4h0M531.9 557.2h0M531.9 561.2h0M436.5 610.9h0M436.5 607.4h0M436.5 604.3h0M436.5 611.0h0M505.9 597.4h0M505.9 598.3h0M505.9 608.5h0M505.9 605.7h0M567.0 577.3h0M567.0 572.3h0M567.0 562.4h0M567.0 569.8h0M527.5 541.1h0M527.5 550.4h0M527.5 551.2h0M527.5 559.9h0M558.3 629.3h0M558.3 619.6h0M558.3 630.8h0M558.3 623.2h0M481.5 595.4h0M481.5 584.2h0M481.5 596.9h0M481.5 593.1h0M479.3 578.2h0M479.3 570.2h0M479.3 572.0h0M479.3 570.1h0M473.5 597.4h0M473.5 609.6h0M473.5 603.2h0M473.5 594.7h0M490.5 581.4h0M490.5 589.3h0M490.5 579.1h0M490.5 589.0h0M473.2 586.7h0M473.2 596.6h0M473.2 599.3h0M473.2 595.7h0" stroke="#1f77b4" stroke-width="3.4" stroke-linecap="round" fill="none"/><path d="M422.15 517.00V679.50H587.95M419.35 522.60H422.15M417.55 530.45H422.15M419.35 538.30H422.15M419.35 546.15H422.15M419.35 554.00H422.15M419.35 561.85H422.15M417.55 569.70H422.15M419.35 577.55H422.15M419.35 585.40H422.15M419.35 593.25H422.15M419.35 601.10H422.15M417.55 608.95H422.15M419.35 616.80H422.15M419.35 624.65H422.15M419.35 632.50H422.15M419.35 640.35H422.15M417.55 648.20H422.15M419.35 656.05H422.15M419.35 663.90H422.15M419.35 671.75H422.15M423.20 679.50V682.80M429.30 679.50V684.50M435.40 679.50V682.80M441.49 679.50V682.80M447.59 679.50V682.80M453.68 679.50V682.80M459.78 679.50V684.50M465.88 679.50V682.80M471.97 679.50V682.80M478.07 679.50V682.80M484.16 679.50V682.80M490.26 679.50V684.50M496.36 679.50V682.80M502.45 679.50V682.80M508.55 679.50V682.80M514.64 679.50V682.80M520.74 679.50V684.50M526.84 679.50V682.80M532.93 679.50V682.80M539.03 679.50V682.80M545.12 679.50V682.80M551.22 679.50V684.50M557.32 679.50V682.80M563.41 679.50V682.80M569.51 679.50V682.80M575.60 679.50V682.80M581.70 679.50V684.50M587.80 679.50V682.80" stroke="#222" stroke-width="1.1" fill="none"/></svg>
<div class="t" style="left:382.15px;top:525.45px;width:31.00px;text-align:right;font-size:9px;color:#555;line-height:10px">30</div>
<div class="t" style="left:382.15px;top:564.70px;width:31.00px;text-align:right;font-size:9px;color:#555;line-height:10px">20</div>
<div class="t" style="left:382.15px;top:603.95px;width:31.00px;text-align:right;font-size:9px;color:#555;line-height:10px">10</div>
<div class="t" style="left:382.15px;top:643.20px;width:31.00px;text-align:right;font-size:9px;color:#555;line-height:10px">0</div>
<div class="t" style="left:409.30px;top:687.50px;width:40px;text-align:center;font-size:9px;color:#555;line-height:10px">5</div>
<div class="t" style="left:439.78px;top:687.50px;width:40px;text-align:center;font-size:9px;color:#555;line-height:10px">6</div>
<div class="t" style="left:470.26px;top:687.50px;width:40px;text-align:center;font-size:9px;color:#555;line-height:10px">7</div>
<div class="t" style="left:500.74px;top:687.50px;width:40px;text-align:center;font-size:9px;color:#555;line-height:10px">8</div>
<div class="t" style="left:531.22px;top:687.50px;width:40px;text-align:center;font-size:9px;color:#555;line-height:10px">9</div>
<div class="t" style="left:561.70px;top:687.50px;width:40px;text-align:center;font-size:9px;color:#555;line-height:10px">10</div>
<div class="t" style="left:622.70px;top:501.82px;font-size:10.25px;font-weight:bold;color:#444">Salt 2</div>
<svg class="b" style="left:0;top:0" width="1200" height="696"><path d="M621.90 530.45H787.70M621.90 569.70H787.70M621.90 608.95H787.70M621.90 648.20H787.70M629.10 517.00V679.50M659.58 517.00V679.50M690.06 517.00V679.50M720.54 517.00V679.50M751.02 517.00V679.50M781.50 517.00V679.50M621.90 517.50H787.70M787.20 517.00V679.50" stroke="#e8e8e8" stroke-width="1" fill="none"/><path d="M654.2 626.6h0M654.2 610.7h0M654.2 610.3h0M654.2 618.4h0M706.1 610.8h0M706.1 632.1h0M706.1 606.9h0M706.1 620.7h0M651.2 620.5h0M651.2 605.2h0M651.2 611.3h0M651.2 621.3h0M696.4 617.7h0M696.4 613.4h0M696.4 614.7h0M696.4 606.7h0M742.0 595.9h0M742.0 613.7h0M742.0 603.7h0M742.0 610.0h0M634.8 590.2h0M634.8 592.1h0M634.8 599.1h0M634.8 604.0h0M773.8 622.9h0M773.8 625.9h0M773.8 631.6h0M773.8 616.2h0M684.8 625.3h0M684.8 619.8h0M684.8 624.7h0M684.8 619.3h0M653.3 622.3h0M653.3 628.5h0M653.3 626.8h0M653.3 627.3h0M646.3 619.8h0M646.3 620.0h0M646.3 616.8h0M646.3 602.3h0M666.6 527.2h0M666.6 530.8h0M666.6 537.9h0M666.6 535.7h0M775.1 599.1h0M775.1 604.2h0M775.1 602.4h0M775.1 603.4h0M706.2 574.7h0M706.2 579.1h0M706.2 575.4h0M706.2 581.4h0M673.0 586.8h0M673.0 587.3h0M673.0 585.8h0M673.0 579.6h0M727.5 555.4h0M727.5 559.1h0M727.5 553.7h0M727.5 546.9h0M633.4 561.1h0M633.4 569.5h0M633.4 562.6h0M633.4 561.0h0M702.9 567.4h0M702.9 576.4h0M702.9 564.1h0M702.9 565.1h0M632.7 557.5h0M632.7 559.6h0M632.7 554.1h0M632.7 552.4h0M775.2 609.8h0M775.2 610.7h0M775.2 611.1h0M775.2 615.2h0M729.0 573.3h0M729.0 556.5h0M729.0 578.7h0M729.0 560.3h0M656.8 575.4h0M656.8 584.9h0M656.8 593.8h0M656.8 595.7h0M770.7 638.7h0M770.7 636.0h0M770.7 636.2h0M770.7 640.4h0M667.6 563.1h0M667.6 552.8h0M667.6 550.0h0M667.6 546.8h0M703.8 569.7h0M703.8 568.2h0M703.8 572.1h0M703.8 570.7h0M673.5 549.1h0M673.5 547.8h0M673.5 554.5h0M673.5 561.8h0M640.7 603.9h0M640.7 604.1h0M640.7 588.6h0M640.7 597.0h0M732.7 578.1h0M732.7 577.8h0M732.7 581.2h0M732.7 570.4h0M671.1 608.5h0M671.1 614.2h0M671.1 606.8h0M671.1 601.1h0M725.4 582.8h0M725.4 589.7h0M725.4 577.6h0M725.4 582.2h0M723.5 557.9h0M723.5 546.6h0M723.5 564.9h0M723.5 552.7h0M776.0 584.9h0M776.0 581.4h0M776.0 595.5h0M776.0 585.2h0M723.6 585.9h0M723.6 592.6h0M723.6 573.8h0M723.6 575.7h0M660.5 568.7h0M660.5 573.7h0M660.5 572.3h0M660.5 567.3h0M776.5 570.3h0M776.5 561.4h0M776.5 571.7h0M776.5 574.6h0M690.3 600.1h0M690.3 593.8h0M690.3 591.1h0M690.3 597.2h0M634.3 551.8h0M634.3 558.3h0M634.3 550.9h0M634.3 557.1h0M665.7 569.2h0M665.7 563.9h0M665.7 568.6h0M665.7 568.3h0M716.1 605.7h0M716.1 604.1h0M716.1 601.3h0M716.1 597.8h0M663.4 585.4h0M663.4 586.8h0M663.4 585.9h0M663.4 576.2h0M657.8 595.2h0M657.8 587.4h0M657.8 594.6h0M657.8 589.1h0M732.1 576.3h0M732.1 584.7h0M732.1 573.6h0M732.1 580.2h0M707.1 600.2h0M707.1 591.9h0M707.1 592.1h0M707.1 589.3h0M749.4 609.8h0M749.4 605.2h0M749.4 615.5h0M749.4 620.3h0M709.0 564.5h0M709.0 558.5h0M709.0 572.6h0M709.0 562.6h0M725.6 561.1h0M725.6 573.7h0M725.6 560.2h0M725.6 563.0h0M637.6 593.8h0M637.6 601.1h0M637.6 588.2h0M637.6 605.2h0M630.8 566.5h0M630.8 564.8h0M630.8 569.9h0M630.8 570.9h0M705.4 559.1h0M705.4 553.3h0M705.4 575.3h0M705.4 568.7h0M763.6 595.5h0M763.6 597.8h0M763.6 596.4h0M763.6 599.0h0M780.6 613.7h0M780.6 626.7h0M780.6 613.5h0M780.6 624.8h0M661.5 573.7h0M661.5 565.8h0M661.5 565.9h0M661.5 577.1h0M743.6 561.2h0M743.6 554.4h0M743.6 566.3h0M743.6 556.0h0M711.1 582.4h0M711.1 596.5h0M711.1 587.2h0M711.1 594.1h0M653.3 609.3h0M653.3 608.5h0M653.3 613.1h0M653.3 615.9h0M781.1 608.5h0M781.1 619.7h0M781.1 613.1h0M781.1 610.3h0M649.3 570.5h0M649.3 562.9h0M649.3 570.3h0M649.3 570.6h0M761.0 600.3h0M761.0 601.5h0M761.0 614.6h0M761.0 600.0h0M764.8 593.1h0M764.8 597.8h0M764.8 585.8h0M764.8 585.4h0M645.0 570.8h0M645.0 557.6h0M645.0 556.8h0M645.0 566.4h0M769.5 578.0h0M769.5 589.1h0M769.5 590.8h0M769.5 585.0h0M638.3 564.8h0M638.3 566.8h0M638.3 571.7h0M638.3 572.4h0M632.3 592.6h0M632.3 591.6h0M632.3 605.1h0M632.3 593.4h0M718.4 575.9h0M718.4 579.0h0M718.4 580.1h0M718.4 573.2h0M642.3 577.6h0M642.3 577.3h0M642.3 579.5h0M642.3 568.6h0M776.1 617.5h0M776.1 629.4h0M776.1 629.3h0M776.1 620.2h0M646.7 589.4h0M646.7 589.5h0M646.7 593.0h0M646.7 595.8h0M748.0 617.6h0M748.0 613.6h0M748.0 608.1h0M748.0 612.8h0M630.5 565.7h0M630.5 579.6h0M630.5 581.7h0M630.5 588.5h0M717.0 583.4h0M717.0 580.0h0M717.0 578.5h0M717.0 574.3h0M747.4 565.6h0M747.4 562.6h0M747.4 566.9h0M747.4 554.1h0M688.4 553.3h0M688.4 550.3h0M688.4 552.0h0M688.4 552.2h0M676.1 616.9h0M676.1 606.4h0M676.1 614.1h0M676.1 616.8h0M755.2 604.7h0M755.2 605.1h0M755.2 601.6h0M755.2 597.2h0M679.4 570.4h0M679.4 571.7h0M679.4 574.3h0M679.4 570.6h0M654.3 583.8h0M654.3 575.2h0M654.3 596.5h0M654.3 584.7h0M658.0 555.6h0M658.0 559.7h0M658.0 559.3h0M658.0 541.4h0M651.3 578.5h0M651.3 569.7h0M651.3 575.4h0M651.3 587.0h0M689.4 568.7h0M689.4 574.6h0M689.4 561.8h0M689.4 573.5h0M647.6 605.1h0M647.6 590.5h0M647.6 598.8h0M647.6 600.1h0M728.9 587.6h0M728.9 567.2h0M728.9 576.1h0M728.9 584.6h0M737.8 612.2h0M737.8 617.2h0M737.8 614.4h0M737.8 616.7h0M728.6 573.6h0M728.6 565.0h0M728.6 568.7h0M728.6 571.3h0M736.1 601.3h0M736.1 600.8h0M736.1 607.8h0M736.1 608.9h0M725.1 566.6h0M725.1 567.4h0M725.1 560.8h0M725.1 548.0h0M681.0 603.0h0M681.0 595.4h0M681.0 593.7h0M681.0 588.1h0M664.4 568.7h0M664.4 580.9h0M664.4 568.5h0M664.4 564.4h0M770.6 623.2h0M770.6 627.0h0M770.6 632.3h0M770.6 624.7h0M635.4 561.8h0M635.4 554.7h0M635.4 571.2h0M635.4 554.3h0M641.9 578.1h0M641.9 579.6h0M641.9 584.4h0M641.9 592.3h0M768.0 598.6h0M768.0 609.7h0M768.0 593.3h0M768.0 613.3h0M767.7 594.0h0M767.7 593.7h0M767.7 589.2h0M767.7 598.3h0M774.0 639.9h0M774.0 641.9h0M774.0 633.5h0M774.0 646.6h0M703.6 547.4h0M703.6 551.9h0M703.6 556.8h0M703.6 540.5h0M691.7 591.3h0M691.7 585.2h0M691.7 589.4h0M691.7 574.8h0M706.9 612.1h0M706.9 608.8h0M706.9 600.1h0M706.9 606.5h0M671.7 569.8h0M671.7 572.7h0M671.7 575.4h0M671.7 574.6h0M743.8 574.7h0M743.8 590.2h0M743.8 582.5h0M743.8 570.8h0M756.0 616.7h0M756.0 606.2h0M756.0 609.7h0M756.0 605.0h0M727.1 569.2h0M727.1 550.8h0M727.1 554.9h0M727.1 562.1h0M706.3 560.9h0M706.3 562.2h0M706.3 542.9h0M706.3 555.0h0M723.2 581.7h0M723.2 583.8h0M723.2 576.3h0M723.2 579.1h0M771.1 580.5h0M771.1 571.7h0M771.1 570.4h0M771.1 573.5h0M686.1 589.9h0M686.1 588.8h0M686.1 584.8h0M686.1 578.5h0M729.0 606.6h0M729.0 603.3h0M729.0 613.6h0M729.0 603.5h0M721.3 550.1h0M721.3 558.6h0M721.3 545.3h0M721.3 549.9h0M754.2 612.2h0M754.2 627.9h0M754.2 607.1h0M754.2 604.4h0M724.5 589.6h0M724.5 604.0h0M724.5 591.0h0M724.5 596.7h0M646.4 578.5h0M646.4 586.3h0M646.4 588.5h0M646.4 595.7h0M740.4 568.5h0M740.4 582.2h0M740.4 567.6h0M740.4 566.1h0M683.6 589.6h0M683.6 593.4h0M683.6 606.1h0M683.6 598.1h0M702.1 569.2h0M702.1 569.4h0M702.1 557.0h0M702.1 551.2h0M669.5 568.3h0M669.5 559.4h0M669.5 571.8h0M669.5 569.2h0M741.4 573.6h0M741.4 565.8h0M741.4 582.1h0M741.4 575.4h0M744.4 559.4h0M744.4 560.2h0M744.4 570.6h0M744.4 570.6h0M647.0 614.4h0M647.0 607.9h0M647.0 623.9h0M647.0 614.3h0M748.3 601.7h0M748.3 596.9h0M748.3 600.9h0M748.3 603.5h0M712.7 605.3h0M712.7 606.0h0M712.7 609.6h0M712.7 604.0h0M775.9 590.7h0M775.9 584.3h0M775.9 593.2h0M775.9 583.2h0M727.9 589.6h0M727.9 600.7h0M727.9 598.2h0M727.9 604.1h0M643.3 593.6h0M643.3 608.7h0M643.3 591.0h0M643.3 598.9h0M769.0 594.4h0M769.0 585.2h0M769.0 596.6h0M769.0 595.6h0M634.1 574.8h0M634.1 569.5h0M634.1 570.7h0M634.1 557.8h0M767.8 589.1h0M767.8 580.7h0M767.8 574.8h0M767.8 579.6h0M765.6 578.3h0M765.6 588.5h0M765.6 577.3h0M765.6 574.5h0M632.9 594.0h0M632.9 601.5h0M632.9 614.6h0M632.9 607.8h0M667.3 550.3h0M667.3 562.4h0M667.3 564.5h0M667.3 553.8h0M629.2 611.1h0M629.2 609.0h0M629.2 597.4h0M629.2 601.4h0M772.3 580.1h0M772.3 579.3h0M772.3 574.4h0M772.3 580.9h0M663.2 557.5h0M663.2 565.3h0M663.2 563.1h0M663.2 557.7h0M731.4 582.0h0M731.4 574.2h0M731.4 577.0h0M731.4 568.9h0M758.3 613.8h0M758.3 611.6h0M758.3 617.2h0M758.3 613.0h0M662.7 549.4h0M662.7 538.5h0M662.7 545.3h0M662.7 547.2h0M699.3 622.2h0M699.3 627.8h0M699.3 617.9h0M699.3 622.7h0M651.6 594.3h0M651.6 589.9h0M651.6 599.5h0M651.6 595.2h0M694.1 592.6h0M694.1 593.6h0M694.1 586.7h0M694.1 594.8h0M740.0 619.0h0M740.0 601.0h0M740.0 603.5h0M740.0 611.8h0M663.0 542.6h0M663.0 542.1h0M663.0 548.0h0M663.0 545.5h0M763.9 639.2h0M763.9 652.3h0M763.9 652.3h0M763.9 646.9h0M778.6 603.3h0M778.6 611.8h0M778.6 611.3h0M778.6 603.2h0M710.9 579.3h0M710.9 579.0h0M710.9 578.3h0M710.9 578.3h0M646.6 609.1h0M646.6 595.3h0M646.6 598.9h0M646.6 602.9h0M732.9 563.3h0M732.9 563.2h0M732.9 558.9h0M732.9 561.2h0M703.9 545.4h0M703.9 549.1h0M703.9 555.0h0M703.9 550.2h0M715.3 572.2h0M715.3 572.1h0M715.3 572.7h0M715.3 586.9h0M760.7 591.8h0M760.7 598.4h0M760.7 600.2h0M760.7 606.9h0M693.4 601.4h0M693.4 582.5h0M693.4 580.3h0M693.4 579.8h0M699.1 570.2h0M699.1 585.9h0M699.1 581.2h0M699.1 589.2h0M634.7 595.3h0M634.7 583.4h0M634.7 575.9h0M634.7 593.4h0M758.2 616.9h0M758.2 616.9h0M758.2 627.3h0M758.2 629.9h0M648.0 609.3h0M648.0 610.4h0M648.0 610.7h0M648.0 604.3h0M768.5 639.3h0M768.5 642.5h0M768.5 640.5h0M768.5 628.2h0M641.3 621.6h0M641.3 624.0h0M641.3 612.2h0M641.3 617.6h0M705.4 577.7h0M705.4 580.2h0M705.4 585.7h0M705.4 579.7h0M632.6 572.0h0M632.6 578.1h0M632.6 578.1h0M632.6 569.4h0M653.3 569.7h0M653.3 585.0h0M653.3 572.4h0M653.3 569.7h0M769.0 582.7h0M769.0 578.2h0M769.0 584.0h0M769.0 584.5h0M726.8 579.9h0M726.8 574.8h0M726.8 583.1h0M726.8 578.8h0M780.6 592.2h0M780.6 575.6h0M780.6 587.2h0M780.6 587.9h0M724.7 570.2h0M724.7 560.6h0M724.7 560.5h0M724.7 559.4h0M700.5 579.3h0M700.5 575.0h0M700.5 572.3h0M700.5 564.4h0M650.4 571.7h0M650.4 590.4h0M650.4 583.9h0M650.4 580.6h0M758.8 610.9h0M758.8 609.6h0M758.8 605.6h0M758.8 606.2h0M770.3 605.0h0M770.3 615.9h0M770.3 613.5h0M770.3 598.7h0M729.5 598.5h0M729.5 592.5h0M729.5 601.1h0M729.5 590.5h0M651.1 564.1h0M651.1 559.3h0M651.1 551.1h0M651.1 562.8h0M733.9 592.1h0M733.9 588.7h0M733.9 592.3h0M733.9 589.8h0M634.5 606.0h0M634.5 606.6h0M634.5 604.8h0M634.5 603.8h0M634.2 571.5h0M634.2 574.7h0M634.2 557.5h0M634.2 566.1h0M755.0 573.3h0M755.0 581.8h0M755.0 582.5h0M755.0 574.0h0M705.0 570.8h0M705.0 568.6h0M705.0 572.8h0M705.0 577.6h0M688.8 555.1h0M688.8 560.3h0M688.8 574.2h0M688.8 562.3h0M779.7 622.0h0M779.7 615.0h0M779.7 598.4h0M779.7 600.1h0M697.4 561.8h0M697.4 565.4h0M697.4 559.0h0M697.4 553.2h0M743.3 593.4h0M743.3 604.0h0M743.3 595.7h0M743.3 582.5h0M665.4 569.0h0M665.4 572.1h0M665.4 557.6h0M665.4 574.8h0M759.6 621.8h0M759.6 639.7h0M759.6 636.4h0M759.6 638.5h0M681.4 575.7h0M681.4 565.8h0M681.4 570.1h0M681.4 567.2h0M653.1 599.7h0M653.1 592.9h0M653.1 585.1h0M653.1 587.6h0M765.1 611.9h0M765.1 609.1h0M765.1 619.9h0M765.1 610.4h0M741.8 590.3h0M741.8 585.3h0M741.8 605.5h0M741.8 595.5h0M754.6 586.5h0M754.6 582.9h0M754.6 583.0h0M754.6 576.6h0M662.8 565.9h0M662.8 571.3h0M662.8 562.7h0M662.8 577.8h0M658.3 610.8h0M658.3 614.0h0M658.3 603.2h0M658.3 615.3h0M766.3 587.2h0M766.3 584.2h0M766.3 579.8h0M766.3 576.9h0M700.8 576.4h0M700.8 561.9h0M700.8 567.3h0M700.8 567.5h0M771.9 637.1h0M771.9 643.4h0M771.9 625.0h0M771.9 621.7h0M730.2 569.2h0M730.2 588.7h0M730.2 570.2h0M730.2 580.6h0M763.0 611.8h0M763.0 618.1h0M763.0 628.6h0M763.0 620.8h0M745.8 594.2h0M745.8 605.1h0M745.8 596.3h0M745.8 594.2h0M700.0 594.5h0M700.0 592.9h0M700.0 608.0h0M700.0 598.2h0M645.9 586.3h0M645.9 575.0h0M645.9 577.7h0M645.9 580.8h0M773.0 591.1h0M773.0 598.0h0M773.0 582.7h0M773.0 586.4h0M759.8 627.7h0M759.8 622.7h0M759.8 617.9h0M759.8 624.5h0M717.2 594.6h0M717.2 600.0h0M717.2 593.2h0M717.2 601.7h0M720.1 599.3h0M720.1 590.3h0M720.1 599.2h0M720.1 608.2h0M669.8 610.5h0M669.8 620.4h0M669.8 599.4h0M669.8 615.5h0M654.4 614.0h0M654.4 623.3h0M654.4 618.3h0M654.4 624.8h0M687.3 607.8h0M687.3 603.1h0M687.3 594.2h0M687.3 593.4h0M683.7 616.7h0M683.7 611.6h0M683.7 603.6h0M683.7 615.4h0M749.0 620.9h0M749.0 621.9h0M749.0 615.5h0M749.0 630.1h0M742.4 623.6h0M742.4 607.0h0M742.4 612.3h0M742.4 614.2h0M660.9 617.9h0M660.9 612.1h0M660.9 606.1h0M660.9 614.4h0M724.6 601.2h0M724.6 597.1h0M724.6 587.2h0M724.6 598.9h0M651.9 562.7h0M651.9 564.2h0M651.9 583.1h0M651.9 578.3h0M678.5 589.0h0M678.5 570.8h0M678.5 576.8h0M678.5 574.6h0M667.3 576.4h0M667.3 562.8h0M667.3 559.7h0M667.3 564.8h0M709.3 533.9h0M709.3 537.6h0M709.3 549.2h0M709.3 535.6h0M729.6 597.7h0M729.6 612.4h0M729.6 610.5h0M729.6 607.9h0M636.6 614.0h0M636.6 611.6h0M636.6 604.0h0M636.6 607.3h0M712.7 557.2h0M712.7 556.0h0M712.7 569.9h0M712.7 555.2h0M736.4 601.3h0M736.4 590.5h0M736.4 593.1h0M736.4 595.2h0M705.0 563.1h0M705.0 547.9h0M705.0 564.2h0M705.0 550.6h0M770.5 596.3h0M770.5 597.2h0M770.5 598.2h0M770.5 598.7h0M756.5 612.4h0M756.5 608.7h0M756.5 605.8h0M756.5 611.5h0M638.4 560.8h0M638.4 565.6h0M638.4 558.9h0M638.4 554.5h0M701.9 585.8h0M701.9 580.5h0M701.9 572.8h0M701.9 570.2h0M736.7 625.9h0M736.7 607.6h0M736.7 612.6h0M736.7 624.6h0M669.6 577.4h0M669.6 579.1h0M669.6 581.2h0M669.6 578.6h0M762.0 589.3h0M762.0 604.6h0M762.0 596.5h0M762.0 597.1h0M769.3 605.8h0M769.3 595.3h0M769.3 601.0h0M769.3 597.2h0M696.4 565.9h0M696.4 565.2h0M696.4 575.9h0M696.4 576.4h0M699.0 559.0h0M699.0 551.6h0M699.0 561.0h0M699.0 555.9h0M649.7 612.8h0M649.7 627.4h0M649.7 614.9h0M649.7 621.8h0M745.9 632.2h0M745.9 632.2h0M745.9 620.6h0M745.9 625.5h0M640.6 563.2h0M640.6 568.3h0M640.6 574.6h0M640.6 566.7h0M765.1 614.8h0M765.1 618.0h0M765.1 619.1h0M765.1 614.0h0M760.2 605.7h0M760.2 603.5h0M760.2 597.6h0M760.2 603.9h0M658.0 586.3h0M658.0 580.4h0M658.0 574.9h0M658.0 574.5h0M647.5 578.0h0M647.5 581.9h0M647.5 585.6h0M647.5 571.9h0M691.9 553.3h0M691.9 563.3h0M691.9 557.4h0M691.9 542.2h0M748.5 604.1h0M748.5 610.2h0M748.5 597.6h0M748.5 607.5h0M685.9 586.1h0M685.9 590.1h0M685.9 585.1h0M685.9 591.2h0M692.1 588.8h0M692.1 584.1h0M692.1 597.0h0M692.1 593.1h0M666.7 599.8h0M666.7 590.1h0M666.7 589.1h0M666.7 594.7h0M653.3 607.0h0M653.3 616.7h0M653.3 613.1h0M653.3 611.0h0M781.1 618.5h0M781.1 624.1h0M781.1 616.9h0M781.1 625.4h0M639.9 592.0h0M639.9 579.9h0M639.9 583.2h0M639.9 578.2h0M780.5 592.7h0M780.5 589.7h0M780.5 582.6h0M780.5 591.0h0M751.7 560.2h0M751.7 568.9h0M751.7 570.2h0M751.7 563.8h0M734.9 618.8h0M734.9 607.0h0M734.9 616.1h0M734.9 610.6h0M641.6 562.6h0M641.6 571.7h0M641.6 565.3h0M641.6 576.0h0M767.9 610.2h0M767.9 612.1h0M767.9 614.0h0M767.9 610.0h0M746.8 564.1h0M746.8 566.4h0M746.8 571.1h0M746.8 563.6h0M648.1 607.1h0M648.1 597.9h0M648.1 598.5h0M648.1 609.8h0M757.8 590.1h0M757.8 571.4h0M757.8 578.2h0M757.8 583.4h0M636.5 575.5h0M636.5 574.9h0M636.5 576.9h0M636.5 578.7h0M634.0 583.8h0M634.0 583.2h0M634.0 576.6h0M634.0 582.7h0M698.0 573.1h0M698.0 579.7h0M698.0 569.3h0M698.0 571.3h0M699.9 580.0h0M699.9 570.3h0M699.9 569.8h0M699.9 572.9h0M704.3 599.3h0M704.3 586.6h0M704.3 590.9h0M704.3 587.9h0M690.8 565.8h0M690.8 554.5h0M690.8 567.4h0M690.8 557.9h0M777.1 616.1h0M777.1 624.7h0M777.1 619.9h0M777.1 624.8h0M774.1 611.4h0M774.1 620.9h0M774.1 606.3h0M774.1 619.2h0M772.3 583.9h0M772.3 582.2h0M772.3 589.7h0M772.3 571.2h0M712.2 592.8h0M712.2 604.7h0M712.2 590.2h0M712.2 593.0h0M669.8 582.2h0M669.8 582.2h0M669.8 570.0h0M669.8 580.9h0M645.2 566.7h0M645.2 566.9h0M645.2 580.6h0M645.2 580.6h0M774.6 591.0h0M774.6 591.0h0M774.6 588.7h0M774.6 582.6h0M719.4 577.1h0M719.4 578.0h0M719.4 586.3h0M719.4 584.3h0M733.4 589.6h0M733.4 587.6h0M733.4 599.3h0M733.4 587.8h0M711.4 557.1h0M711.4 574.4h0M711.4 559.6h0M711.4 564.7h0M730.9 572.1h0M730.9 580.6h0M730.9 569.6h0M730.9 572.1h0M634.8 566.3h0M634.8 556.7h0M634.8 559.0h0M634.8 561.7h0M709.3 573.9h0M709.3 582.6h0M709.3 571.7h0M709.3 574.3h0M712.7 590.2h0M712.7 584.4h0M712.7 569.8h0M712.7 580.5h0M762.9 628.8h0M762.9 625.4h0M762.9 629.4h0M762.9 625.9h0M651.6 574.2h0M651.6 566.0h0M651.6 569.2h0M651.6 580.3h0M681.7 566.3h0M681.7 582.4h0M681.7 577.3h0M681.7 580.3h0M724.6 561.5h0M724.6 556.8h0M724.6 570.3h0M724.6 561.7h0M675.5 583.8h0M675.5 568.9h0M675.5 567.8h0M675.5 570.5h0M755.6 593.8h0M755.6 587.4h0M755.6 584.7h0M755.6 590.6h0M728.9 604.0h0M728.9 594.4h0M728.9 587.5h0M728.9 606.1h0M738.6 590.4h0M738.6 597.2h0M738.6 594.5h0M738.6 581.8h0M673.4 571.9h0M673.4 579.9h0M673.4 578.7h0M673.4 591.8h0M707.2 583.0h0M707.2 589.5h0M707.2 586.8h0M707.2 585.9h0M649.2 590.3h0M649.2 593.5h0M649.2 585.0h0M649.2 582.0h0M756.5 579.7h0M756.5 593.3h0M756.5 587.9h0M756.5 580.0h0M639.6 627.6h0M639.6 636.4h0M639.6 636.4h0M639.6 629.7h0M639.1 601.0h0M639.1 583.5h0M639.1 592.9h0M639.1 595.7h0M650.5 620.4h0M650.5 631.1h0M650.5 634.2h0M650.5 632.1h0M745.0 588.3h0M745.0 580.3h0M745.0 583.6h0M745.0 583.4h0M634.8 573.3h0M634.8 569.8h0M634.8 578.1h0M634.8 572.5h0M734.3 601.6h0M734.3 612.6h0M734.3 613.1h0M734.3 620.0h0M713.7 576.1h0M713.7 581.1h0M713.7 578.0h0M713.7 573.6h0M777.3 604.7h0M777.3 603.6h0M777.3 609.0h0M777.3 598.0h0M670.2 561.0h0M670.2 564.6h0M670.2 556.6h0M670.2 569.1h0M649.3 598.1h0M649.3 576.5h0M649.3 590.0h0M649.3 576.7h0M710.1 573.8h0M710.1 565.9h0M710.1 589.5h0M710.1 588.2h0M686.7 553.6h0M686.7 533.2h0M686.7 537.0h0M686.7 548.3h0M712.5 593.8h0M712.5 601.3h0M712.5 598.0h0M712.5 593.2h0M760.2 610.1h0M760.2 608.3h0M760.2 606.0h0M760.2 612.2h0M769.4 613.5h0M769.4 619.3h0M769.4 604.6h0M769.4 616.2h0M715.8 568.6h0M715.8 575.0h0M715.8 568.4h0M715.8 574.2h0M778.3 624.0h0M778.3 618.8h0M778.3 628.6h0M778.3 630.1h0M715.3 547.4h0M715.3 561.2h0M715.3 562.4h0M715.3 548.1h0M641.4 594.6h0M641.4 579.3h0M641.4 583.2h0M641.4 581.0h0M662.8 568.0h0M662.8 573.4h0M662.8 574.8h0M662.8 575.5h0M647.9 612.4h0M647.9 606.9h0M647.9 602.9h0M647.9 617.6h0M729.3 596.7h0M729.3 613.0h0M729.3 597.1h0M729.3 613.0h0M656.6 603.4h0M656.6 616.9h0M656.6 605.2h0M656.6 597.7h0M664.6 586.1h0M664.6 586.7h0M664.6 596.3h0M664.6 596.9h0M659.8 615.8h0M659.8 607.1h0M659.8 618.2h0M659.8 606.1h0M767.9 625.2h0M767.9 619.5h0M767.9 616.0h0M767.9 613.1h0M748.0 575.5h0M748.0 561.2h0M748.0 573.8h0M748.0 558.6h0M723.6 596.1h0M723.6 599.3h0M723.6 601.4h0M723.6 603.7h0M748.3 608.2h0M748.3 602.9h0M748.3 605.4h0M748.3 607.9h0M636.0 606.8h0M636.0 601.8h0M636.0 597.0h0M636.0 604.6h0M781.2 595.8h0M781.2 585.1h0M781.2 589.9h0M781.2 584.2h0M755.9 575.8h0M755.9 580.3h0M755.9 582.4h0M755.9 575.9h0M630.3 610.9h0M630.3 613.5h0M630.3 609.7h0M630.3 617.0h0M630.4 608.3h0M630.4 597.7h0M630.4 613.9h0M630.4 605.0h0M653.4 578.3h0M653.4 565.2h0M653.4 578.0h0M653.4 576.5h0M668.4 566.9h0M668.4 583.1h0M668.4 564.2h0M668.4 568.1h0M780.2 621.3h0M780.2 636.3h0M780.2 619.6h0M780.2 625.0h0M705.2 586.4h0M705.2 578.0h0M705.2 583.7h0M705.2 584.4h0M765.2 592.5h0M765.2 578.4h0M765.2 585.2h0M765.2 588.7h0M699.7 581.0h0M699.7 583.9h0M699.7 573.6h0M699.7 573.1h0M779.5 580.0h0M779.5 588.0h0M779.5 585.2h0M779.5 584.2h0M658.7 592.9h0M658.7 598.8h0M658.7 598.1h0M658.7 595.8h0M733.7 621.5h0M733.7 621.0h0M733.7 615.4h0M733.7 613.4h0M673.3 554.7h0M673.3 575.5h0M673.3 563.0h0M673.3 566.0h0M694.6 553.6h0M694.6 541.3h0M694.6 546.2h0M694.6 558.9h0M720.6 588.4h0M720.6 585.4h0M720.6 592.8h0M720.6 582.7h0M702.9 612.1h0M702.9 596.1h0M702.9 607.7h0M702.9 604.3h0M678.4 562.9h0M678.4 568.7h0M678.4 561.2h0M678.4 556.6h0M642.7 571.7h0M642.7 575.8h0M642.7 580.7h0M642.7 580.0h0M759.5 608.6h0M759.5 617.7h0M759.5 620.7h0M759.5 615.5h0M669.6 568.7h0M669.6 551.5h0M669.6 550.6h0M669.6 560.6h0M753.4 620.3h0M753.4 630.2h0M753.4 607.0h0M753.4 620.4h0M713.6 577.4h0M713.6 574.4h0M713.6 575.0h0M713.6 570.2h0M706.6 594.6h0M706.6 587.9h0M706.6 588.6h0M706.6 580.9h0M773.4 587.3h0M773.4 585.0h0M773.4 578.7h0M773.4 586.0h0M661.1 611.3h0M661.1 621.4h0M661.1 614.5h0M661.1 599.1h0M677.3 568.5h0M677.3 565.3h0M677.3 561.7h0M677.3 569.5h0M760.5 654.4h0M760.5 639.3h0M760.5 649.7h0M760.5 653.3h0M759.9 592.7h0M759.9 599.8h0M759.9 589.0h0M759.9 608.5h0M651.3 622.9h0M651.3 612.3h0M651.3 620.0h0M651.3 611.9h0M649.9 580.9h0M649.9 587.6h0M649.9 590.1h0M649.9 594.6h0M685.2 581.3h0M685.2 584.8h0M685.2 602.0h0M685.2 597.9h0M713.4 568.4h0M713.4 575.4h0M713.4 569.2h0M713.4 568.0h0M649.0 603.5h0M649.0 611.6h0M649.0 602.6h0M649.0 611.0h0M755.8 569.3h0M755.8 559.0h0M755.8 560.5h0M755.8 565.9h0M650.0 606.9h0M650.0 607.8h0M650.0 602.5h0M650.0 616.0h0M655.3 610.0h0M655.3 608.1h0M655.3 605.0h0M655.3 610.3h0M750.6 579.3h0M750.6 572.7h0M750.6 588.9h0M750.6 572.8h0M701.2 562.8h0M701.2 566.1h0M701.2 578.2h0M701.2 568.9h0M665.5 580.3h0M665.5 572.4h0M665.5 569.9h0M665.5 575.5h0M644.3 600.8h0M644.3 612.5h0M644.3 607.1h0M644.3 608.7h0M663.5 573.8h0M663.5 569.3h0M663.5 574.2h0M663.5 579.8h0M763.7 597.9h0M763.7 609.0h0M763.7 600.9h0M763.7 604.2h0M658.7 574.2h0M658.7 579.7h0M658.7 564.6h0M658.7 577.9h0M643.0 609.0h0M643.0 618.5h0M643.0 620.2h0M643.0 612.2h0M681.5 590.0h0M681.5 603.5h0M681.5 594.4h0M681.5 588.1h0M688.6 573.0h0M688.6 560.0h0M688.6 560.9h0M688.6 564.5h0M738.6 594.4h0M738.6 603.4h0M738.6 589.3h0M738.6 589.1h0M740.1 615.5h0M740.1 616.1h0M740.1 624.3h0M740.1 610.5h0M702.8 608.0h0M702.8 604.0h0M702.8 610.7h0M702.8 598.5h0M780.5 584.0h0M780.5 579.0h0M780.5 564.2h0M780.5 573.4h0M722.9 600.9h0M722.9 599.0h0M722.9 599.4h0M722.9 608.1h0M707.8 576.9h0M707.8 575.7h0M707.8 572.1h0M707.8 578.4h0M697.6 555.1h0M697.6 562.3h0M697.6 569.1h0M697.6 572.6h0M704.7 604.5h0M704.7 589.5h0M704.7 608.3h0M704.7 589.3h0M768.6 596.1h0M768.6 589.9h0M768.6 599.1h0M768.6 580.9h0M762.1 617.3h0M762.1 617.4h0M762.1 620.3h0M762.1 612.4h0M664.8 601.9h0M664.8 612.7h0M664.8 597.8h0M664.8 599.6h0M695.2 621.6h0M695.2 610.1h0M695.2 604.9h0M695.2 612.5h0M723.3 587.1h0M723.3 579.4h0M723.3 575.2h0M723.3 582.7h0M633.1 564.5h0M633.1 571.0h0M633.1 580.7h0M633.1 582.8h0M732.9 589.9h0M732.9 591.8h0M732.9 594.5h0M732.9 588.6h0M763.8 594.5h0M763.8 592.6h0M763.8 575.6h0M763.8 590.5h0M634.9 558.3h0M634.9 556.3h0M634.9 554.1h0M634.9 549.1h0M636.9 614.8h0M636.9 607.0h0M636.9 613.6h0M636.9 598.6h0M744.4 569.8h0M744.4 580.2h0M744.4 570.9h0M744.4 576.0h0M731.7 557.2h0M731.7 570.4h0M731.7 557.2h0M731.7 561.2h0M636.3 610.9h0M636.3 607.4h0M636.3 604.3h0M636.3 611.0h0M705.7 597.4h0M705.7 598.3h0M705.7 608.5h0M705.7 605.7h0M766.8 577.3h0M766.8 572.3h0M766.8 562.4h0M766.8 569.8h0M727.3 541.1h0M727.3 550.4h0M727.3 551.2h0M727.3 559.9h0M758.1 629.3h0M758.1 619.6h0M758.1 630.8h0M758.1 623.2h0M681.3 595.4h0M681.3 584.2h0M681.3 596.9h0M681.3 593.1h0M679.1 578.2h0M679.1 570.2h0M679.1 572.0h0M679.1 570.1h0M673.3 597.4h0M673.3 609.6h0M673.3 603.2h0M673.3 594.7h0M690.3 581.4h0M690.3 589.3h0M690.3 579.1h0M690.3 589.0h0M673.0 586.7h0M673.0 596.6h0M673.0 599.3h0M673.0 595.7h0" stroke="#1f77b4" stroke-width="3.4" stroke-linecap="round" fill="none"/><path d="M621.90 517.00V679.50H787.70M619.10 522.60H621.90M617.30 530.45H621.90M619.10 538.30H621.90M619.10 546.15H621.90M619.10 554.00H621.90M619.10 561.85H621.90M617.30 569.70H621.90M619.10 577.55H621.90M619.10 585.40H621.90M619.10 593.25H621.90M619.10 601.10H621.90M617.30 608.95H621.90M619.10 616.80H621.90M619.10 624.65H621.90M619.10 632.50H621.90M619.10 640.35H621.90M617.30 648.20H621.90M619.10 656.05H621.90M619.10 663.90H621.90M619.10 671.75H621.90M623.00 679.50V682.80M629.10 679.50V684.50M635.20 679.50V682.80M641.29 679.50V682.80M647.39 679.50V682.80M653.48 679.50V682.80M659.58 679.50V684.50M665.68 679.50V682.80M671.77 679.50V682.80M677.87 679.50V682.80M683.96 679.50V682.80M690.06 679.50V684.50M696.16 679.50V682.80M702.25 679.50V682.80M708.35 679.50V682.80M714.44 679.50V682.80M720.54 679.50V684.50M726.64 679.50V682.80M732.73 679.50V682.80M738.83 679.50V682.80M744.92 679.50V682.80M751.02 679.50V684.50M757.12 679.50V682.80M763.21 679.50V682.80M769.31 679.50V682.80M775.40 679.50V682.80M781.50 679.50V684.50M787.60 679.50V682.80" stroke="#222" stroke-width="1.1" fill="none"/></svg>
<div class="t" style="left:581.90px;top:525.45px;width:31.00px;text-align:right;font-size:9px;color:#555;line-height:10px">30</div>
<div class="t" style="left:581.90px;top:564.70px;width:31.00px;text-align:right;font-size:9px;color:#555;line-height:10px">20</div>
<div class="t" style="left:581.90px;top:603.95px;width:31.00px;text-align:right;font-size:9px;color:#555;line-height:10px">10</div>
<div class="t" style="left:581.90px;top:643.20px;width:31.00px;text-align:right;font-size:9px;color:#555;line-height:10px">0</div>
<div class="t" style="left:609.10px;top:687.50px;width:40px;text-align:center;font-size:9px;color:#555;line-height:10px">5</div>
<div class="t" style="left:639.58px;top:687.50px;width:40px;text-align:center;font-size:9px;color:#555;line-height:10px">6</div>
<div class="t" style="left:670.06px;top:687.50px;width:40px;text-align:center;font-size:9px;color:#555;line-height:10px">7</div>
<div class="t" style="left:700.54px;top:687.50px;width:40px;text-align:center;font-size:9px;color:#555;line-height:10px">8</div>
<div class="t" style="left:731.02px;top:687.50px;width:40px;text-align:center;font-size:9px;color:#555;line-height:10px">9</div>
<div class="t" style="left:761.50px;top:687.50px;width:40px;text-align:center;font-size:9px;color:#555;line-height:10px">10</div>
<div class="t" style="left:822.45px;top:501.82px;font-size:10.25px;font-weight:bold;color:#444">Temperature²</div>
<svg class="b" style="left:0;top:0" width="1200" height="696"><path d="M821.65 530.45H987.45M821.65 569.70H987.45M821.65 608.95H987.45M821.65 648.20H987.45M841.20 517.00V679.50M866.46 517.00V679.50M891.72 517.00V679.50M916.98 517.00V679.50M942.24 517.00V679.50M967.50 517.00V679.50M821.65 517.50H987.45M986.95 517.00V679.50" stroke="#e8e8e8" stroke-width="1" fill="none"/><path d="M980.1 626.6h0M980.1 610.7h0M980.1 610.3h0M980.1 618.4h0M891.7 610.8h0M891.7 632.1h0M891.7 606.9h0M891.7 620.7h0M891.7 620.5h0M891.7 605.2h0M891.7 611.3h0M891.7 621.3h0M891.7 617.7h0M891.7 613.4h0M891.7 614.7h0M891.7 606.7h0M828.6 595.9h0M828.6 613.7h0M828.6 603.7h0M828.6 610.0h0M891.7 590.2h0M891.7 592.1h0M891.7 599.1h0M891.7 604.0h0M828.6 622.9h0M828.6 625.9h0M828.6 631.6h0M828.6 616.2h0M980.1 625.3h0M980.1 619.8h0M980.1 624.7h0M980.1 619.3h0M980.1 622.3h0M980.1 628.5h0M980.1 626.8h0M980.1 627.3h0M891.7 619.8h0M891.7 620.0h0M891.7 616.8h0M891.7 602.3h0M891.7 527.2h0M891.7 530.8h0M891.7 537.9h0M891.7 535.7h0M980.1 599.1h0M980.1 604.2h0M980.1 602.4h0M980.1 603.4h0M891.7 574.7h0M891.7 579.1h0M891.7 575.4h0M891.7 581.4h0M891.7 586.8h0M891.7 587.3h0M891.7 585.8h0M891.7 579.6h0M828.6 555.4h0M828.6 559.1h0M828.6 553.7h0M828.6 546.9h0M891.7 561.1h0M891.7 569.5h0M891.7 562.6h0M891.7 561.0h0M980.1 567.4h0M980.1 576.4h0M980.1 564.1h0M980.1 565.1h0M891.7 557.5h0M891.7 559.6h0M891.7 554.1h0M891.7 552.4h0M828.6 609.8h0M828.6 610.7h0M828.6 611.1h0M828.6 615.2h0M828.6 573.3h0M828.6 556.5h0M828.6 578.7h0M828.6 560.3h0M980.1 575.4h0M980.1 584.9h0M980.1 593.8h0M980.1 595.7h0M980.1 638.7h0M980.1 636.0h0M980.1 636.2h0M980.1 640.4h0M891.7 563.1h0M891.7 552.8h0M891.7 550.0h0M891.7 546.8h0M828.6 569.7h0M828.6 568.2h0M828.6 572.1h0M828.6 570.7h0M891.7 549.1h0M891.7 547.8h0M891.7 554.5h0M891.7 561.8h0M828.6 603.9h0M828.6 604.1h0M828.6 588.6h0M828.6 597.0h0M980.1 578.1h0M980.1 577.8h0M980.1 581.2h0M980.1 570.4h0M980.1 608.5h0M980.1 614.2h0M980.1 606.8h0M980.1 601.1h0M828.6 582.8h0M828.6 589.7h0M828.6 577.6h0M828.6 582.2h0M891.7 557.9h0M891.7 546.6h0M891.7 564.9h0M891.7 552.7h0M828.6 584.9h0M828.6 581.4h0M828.6 595.5h0M828.6 585.2h0M980.1 585.9h0M980.1 592.6h0M980.1 573.8h0M980.1 575.7h0M891.7 568.7h0M891.7 573.7h0M891.7 572.3h0M891.7 567.3h0M891.7 570.3h0M891.7 561.4h0M891.7 571.7h0M891.7 574.6h0M980.1 600.1h0M980.1 593.8h0M980.1 591.1h0M980.1 597.2h0M980.1 551.8h0M980.1 558.3h0M980.1 550.9h0M980.1 557.1h0M828.6 569.2h0M828.6 563.9h0M828.6 568.6h0M828.6 568.3h0M980.1 605.7h0M980.1 604.1h0M980.1 601.3h0M980.1 597.8h0M980.1 585.4h0M980.1 586.8h0M980.1 585.9h0M980.1 576.2h0M828.6 595.2h0M828.6 587.4h0M828.6 594.6h0M828.6 589.1h0M828.6 576.3h0M828.6 584.7h0M828.6 573.6h0M828.6 580.2h0M891.7 600.2h0M891.7 591.9h0M891.7 592.1h0M891.7 589.3h0M980.1 609.8h0M980.1 605.2h0M980.1 615.5h0M980.1 620.3h0M828.6 564.5h0M828.6 558.5h0M828.6 572.6h0M828.6 562.6h0M891.7 561.1h0M891.7 573.7h0M891.7 560.2h0M891.7 563.0h0M828.6 593.8h0M828.6 601.1h0M828.6 588.2h0M828.6 605.2h0M980.1 566.5h0M980.1 564.8h0M980.1 569.9h0M980.1 570.9h0M980.1 559.1h0M980.1 553.3h0M980.1 575.3h0M980.1 568.7h0M980.1 595.5h0M980.1 597.8h0M980.1 596.4h0M980.1 599.0h0M980.1 613.7h0M980.1 626.7h0M980.1 613.5h0M980.1 624.8h0M980.1 573.7h0M980.1 565.8h0M980.1 565.9h0M980.1 577.1h0M891.7 561.2h0M891.7 554.4h0M891.7 566.3h0M891.7 556.0h0M980.1 582.4h0M980.1 596.5h0M980.1 587.2h0M980.1 594.1h0M828.6 609.3h0M828.6 608.5h0M828.6 613.1h0M828.6 615.9h0M891.7 608.5h0M891.7 619.7h0M891.7 613.1h0M891.7 610.3h0M891.7 570.5h0M891.7 562.9h0M891.7 570.3h0M891.7 570.6h0M828.6 600.3h0M828.6 601.5h0M828.6 614.6h0M828.6 600.0h0M828.6 593.1h0M828.6 597.8h0M828.6 585.8h0M828.6 585.4h0M891.7 570.8h0M891.7 557.6h0M891.7 556.8h0M891.7 566.4h0M980.1 578.0h0M980.1 589.1h0M980.1 590.8h0M980.1 585.0h0M828.6 564.8h0M828.6 566.8h0M828.6 571.7h0M828.6 572.4h0M980.1 592.6h0M980.1 591.6h0M980.1 605.1h0M980.1 593.4h0M980.1 575.9h0M980.1 579.0h0M980.1 580.1h0M980.1 573.2h0M980.1 577.6h0M980.1 577.3h0M980.1 579.5h0M980.1 568.6h0M980.1 617.5h0M980.1 629.4h0M980.1 629.3h0M980.1 620.2h0M980.1 589.4h0M980.1 589.5h0M980.1 593.0h0M980.1 595.8h0M891.7 617.6h0M891.7 613.6h0M891.7 608.1h0M891.7 612.8h0M891.7 565.7h0M891.7 579.6h0M891.7 581.7h0M891.7 588.5h0M828.6 583.4h0M828.6 580.0h0M828.6 578.5h0M828.6 574.3h0M891.7 565.6h0M891.7 562.6h0M891.7 566.9h0M891.7 554.1h0M891.7 553.3h0M891.7 550.3h0M891.7 552.0h0M891.7 552.2h0M828.6 616.9h0M828.6 606.4h0M828.6 614.1h0M828.6 616.8h0M828.6 604.7h0M828.6 605.1h0M828.6 601.6h0M828.6 597.2h0M891.7 570.4h0M891.7 571.7h0M891.7 574.3h0M891.7 570.6h0M891.7 583.8h0M891.7 575.2h0M891.7 596.5h0M891.7 584.7h0M891.7 555.6h0M891.7 559.7h0M891.7 559.3h0M891.7 541.4h0M828.6 578.5h0M828.6 569.7h0M828.6 575.4h0M828.6 587.0h0M891.7 568.7h0M891.7 574.6h0M891.7 561.8h0M891.7 573.5h0M828.6 605.1h0M828.6 590.5h0M828.6 598.8h0M828.6 600.1h0M980.1 587.6h0M980.1 567.2h0M980.1 576.1h0M980.1 584.6h0M828.6 612.2h0M828.6 617.2h0M828.6 614.4h0M828.6 616.7h0M891.7 573.6h0M891.7 565.0h0M891.7 568.7h0M891.7 571.3h0M891.7 601.3h0M891.7 600.8h0M891.7 607.8h0M891.7 608.9h0M891.7 566.6h0M891.7 567.4h0M891.7 560.8h0M891.7 548.0h0M891.7 603.0h0M891.7 595.4h0M891.7 593.7h0M891.7 588.1h0M828.6 568.7h0M828.6 580.9h0M828.6 568.5h0M828.6 564.4h0M891.7 623.2h0M891.7 627.0h0M891.7 632.3h0M891.7 624.7h0M891.7 561.8h0M891.7 554.7h0M891.7 571.2h0M891.7 554.3h0M980.1 578.1h0M980.1 579.6h0M980.1 584.4h0M980.1 592.3h0M828.6 598.6h0M828.6 609.7h0M828.6 593.3h0M828.6 613.3h0M828.6 594.0h0M828.6 593.7h0M828.6 589.2h0M828.6 598.3h0M980.1 639.9h0M980.1 641.9h0M980.1 633.5h0M980.1 646.6h0M891.7 547.4h0M891.7 551.9h0M891.7 556.8h0M891.7 540.5h0M891.7 591.3h0M891.7 585.2h0M891.7 589.4h0M891.7 574.8h0M828.6 612.1h0M828.6 608.8h0M828.6 600.1h0M828.6 606.5h0M891.7 569.8h0M891.7 572.7h0M891.7 575.4h0M891.7 574.6h0M891.7 574.7h0M891.7 590.2h0M891.7 582.5h0M891.7 570.8h0M980.1 616.7h0M980.1 606.2h0M980.1 609.7h0M980.1 605.0h0M828.6 569.2h0M828.6 550.8h0M828.6 554.9h0M828.6 562.1h0M891.7 560.9h0M891.7 562.2h0M891.7 542.9h0M891.7 555.0h0M891.7 581.7h0M891.7 583.8h0M891.7 576.3h0M891.7 579.1h0M980.1 580.5h0M980.1 571.7h0M980.1 570.4h0M980.1 573.5h0M891.7 589.9h0M891.7 588.8h0M891.7 584.8h0M891.7 578.5h0M891.7 606.6h0M891.7 603.3h0M891.7 613.6h0M891.7 603.5h0M828.6 550.1h0M828.6 558.6h0M828.6 545.3h0M828.6 549.9h0M980.1 612.2h0M980.1 627.9h0M980.1 607.1h0M980.1 604.4h0M891.7 589.6h0M891.7 604.0h0M891.7 591.0h0M891.7 596.7h0M891.7 578.5h0M891.7 586.3h0M891.7 588.5h0M891.7 595.7h0M891.7 568.5h0M891.7 582.2h0M891.7 567.6h0M891.7 566.1h0M980.1 589.6h0M980.1 593.4h0M980.1 606.1h0M980.1 598.1h0M891.7 569.2h0M891.7 569.4h0M891.7 557.0h0M891.7 551.2h0M980.1 568.3h0M980.1 559.4h0M980.1 571.8h0M980.1 569.2h0M980.1 573.6h0M980.1 565.8h0M980.1 582.1h0M980.1 575.4h0M891.7 559.4h0M891.7 560.2h0M891.7 570.6h0M891.7 570.6h0M980.1 614.4h0M980.1 607.9h0M980.1 623.9h0M980.1 614.3h0M828.6 601.7h0M828.6 596.9h0M828.6 600.9h0M828.6 603.5h0M980.1 605.3h0M980.1 606.0h0M980.1 609.6h0M980.1 604.0h0M980.1 590.7h0M980.1 584.3h0M980.1 593.2h0M980.1 583.2h0M891.7 589.6h0M891.7 600.7h0M891.7 598.2h0M891.7 604.1h0M891.7 593.6h0M891.7 608.7h0M891.7 591.0h0M891.7 598.9h0M980.1 594.4h0M980.1 585.2h0M980.1 596.6h0M980.1 595.6h0M980.1 574.8h0M980.1 569.5h0M980.1 570.7h0M980.1 557.8h0M891.7 589.1h0M891.7 580.7h0M891.7 574.8h0M891.7 579.6h0M828.6 578.3h0M828.6 588.5h0M828.6 577.3h0M828.6 574.5h0M828.6 594.0h0M828.6 601.5h0M828.6 614.6h0M828.6 607.8h0M980.1 550.3h0M980.1 562.4h0M980.1 564.5h0M980.1 553.8h0M980.1 611.1h0M980.1 609.0h0M980.1 597.4h0M980.1 601.4h0M828.6 580.1h0M828.6 579.3h0M828.6 574.4h0M828.6 580.9h0M891.7 557.5h0M891.7 565.3h0M891.7 563.1h0M891.7 557.7h0M891.7 582.0h0M891.7 574.2h0M891.7 577.0h0M891.7 568.9h0M891.7 613.8h0M891.7 611.6h0M891.7 617.2h0M891.7 613.0h0M891.7 549.4h0M891.7 538.5h0M891.7 545.3h0M891.7 547.2h0M980.1 622.2h0M980.1 627.8h0M980.1 617.9h0M980.1 622.7h0M828.6 594.3h0M828.6 589.9h0M828.6 599.5h0M828.6 595.2h0M828.6 592.6h0M828.6 593.6h0M828.6 586.7h0M828.6 594.8h0M980.1 619.0h0M980.1 601.0h0M980.1 603.5h0M980.1 611.8h0M891.7 542.6h0M891.7 542.1h0M891.7 548.0h0M891.7 545.5h0M980.1 639.2h0M980.1 652.3h0M980.1 652.3h0M980.1 646.9h0M828.6 603.3h0M828.6 611.8h0M828.6 611.3h0M828.6 603.2h0M891.7 579.3h0M891.7 579.0h0M891.7 578.3h0M891.7 578.3h0M891.7 609.1h0M891.7 595.3h0M891.7 598.9h0M891.7 602.9h0M891.7 563.3h0M891.7 563.2h0M891.7 558.9h0M891.7 561.2h0M828.6 545.4h0M828.6 549.1h0M828.6 555.0h0M828.6 550.2h0M980.1 572.2h0M980.1 572.1h0M980.1 572.7h0M980.1 586.9h0M828.6 591.8h0M828.6 598.4h0M828.6 600.2h0M828.6 606.9h0M828.6 601.4h0M828.6 582.5h0M828.6 580.3h0M828.6 579.8h0M828.6 570.2h0M828.6 585.9h0M828.6 581.2h0M828.6 589.2h0M891.7 595.3h0M891.7 583.4h0M891.7 575.9h0M891.7 593.4h0M828.6 616.9h0M828.6 616.9h0M828.6 627.3h0M828.6 629.9h0M980.1 609.3h0M980.1 610.4h0M980.1 610.7h0M980.1 604.3h0M980.1 639.3h0M980.1 642.5h0M980.1 640.5h0M980.1 628.2h0M980.1 621.6h0M980.1 624.0h0M980.1 612.2h0M980.1 617.6h0M891.7 577.7h0M891.7 580.2h0M891.7 585.7h0M891.7 579.7h0M891.7 572.0h0M891.7 578.1h0M891.7 578.1h0M891.7 569.4h0M891.7 569.7h0M891.7 585.0h0M891.7 572.4h0M891.7 569.7h0M828.6 582.7h0M828.6 578.2h0M828.6 584.0h0M828.6 584.5h0M891.7 579.9h0M891.7 574.8h0M891.7 583.1h0M891.7 578.8h0M891.7 592.2h0M891.7 575.6h0M891.7 587.2h0M891.7 587.9h0M980.1 570.2h0M980.1 560.6h0M980.1 560.5h0M980.1 559.4h0M891.7 579.3h0M891.7 575.0h0M891.7 572.3h0M891.7 564.4h0M891.7 571.7h0M891.7 590.4h0M891.7 583.9h0M891.7 580.6h0M980.1 610.9h0M980.1 609.6h0M980.1 605.6h0M980.1 606.2h0M980.1 605.0h0M980.1 615.9h0M980.1 613.5h0M980.1 598.7h0M891.7 598.5h0M891.7 592.5h0M891.7 601.1h0M891.7 590.5h0M891.7 564.1h0M891.7 559.3h0M891.7 551.1h0M891.7 562.8h0M980.1 592.1h0M980.1 588.7h0M980.1 592.3h0M980.1 589.8h0M980.1 606.0h0M980.1 606.6h0M980.1 604.8h0M980.1 603.8h0M980.1 571.5h0M980.1 574.7h0M980.1 557.5h0M980.1 566.1h0M891.7 573.3h0M891.7 581.8h0M891.7 582.5h0M891.7 574.0h0M891.7 570.8h0M891.7 568.6h0M891.7 572.8h0M891.7 577.6h0M891.7 555.1h0M891.7 560.3h0M891.7 574.2h0M891.7 562.3h0M828.6 622.0h0M828.6 615.0h0M828.6 598.4h0M828.6 600.1h0M828.6 561.8h0M828.6 565.4h0M828.6 559.0h0M828.6 553.2h0M828.6 593.4h0M828.6 604.0h0M828.6 595.7h0M828.6 582.5h0M828.6 569.0h0M828.6 572.1h0M828.6 557.6h0M828.6 574.8h0M980.1 621.8h0M980.1 639.7h0M980.1 636.4h0M980.1 638.5h0M980.1 575.7h0M980.1 565.8h0M980.1 570.1h0M980.1 567.2h0M891.7 599.7h0M891.7 592.9h0M891.7 585.1h0M891.7 587.6h0M891.7 611.9h0M891.7 609.1h0M891.7 619.9h0M891.7 610.4h0M980.1 590.3h0M980.1 585.3h0M980.1 605.5h0M980.1 595.5h0M980.1 586.5h0M980.1 582.9h0M980.1 583.0h0M980.1 576.6h0M891.7 565.9h0M891.7 571.3h0M891.7 562.7h0M891.7 577.8h0M980.1 610.8h0M980.1 614.0h0M980.1 603.2h0M980.1 615.3h0M891.7 587.2h0M891.7 584.2h0M891.7 579.8h0M891.7 576.9h0M828.6 576.4h0M828.6 561.9h0M828.6 567.3h0M828.6 567.5h0M828.6 637.1h0M980.1 643.4h0M828.6 625.0h0M828.6 621.7h0M891.7 569.2h0M891.7 588.7h0M891.7 570.2h0M891.7 580.6h0M828.6 611.8h0M828.6 618.1h0M828.6 628.6h0M828.6 620.8h0M828.6 594.2h0M828.6 605.1h0M828.6 596.3h0M828.6 594.2h0M828.6 594.5h0M828.6 592.9h0M828.6 608.0h0M828.6 598.2h0M828.6 586.3h0M828.6 575.0h0M828.6 577.7h0M828.6 580.8h0M891.7 591.1h0M891.7 598.0h0M891.7 582.7h0M891.7 586.4h0M980.1 627.7h0M980.1 622.7h0M980.1 617.9h0M980.1 624.5h0M980.1 594.6h0M980.1 600.0h0M980.1 593.2h0M980.1 601.7h0M891.7 599.3h0M891.7 590.3h0M891.7 599.2h0M891.7 608.2h0M828.6 610.5h0M828.6 620.4h0M828.6 599.4h0M828.6 615.5h0M891.7 614.0h0M891.7 623.3h0M891.7 618.3h0M891.7 624.8h0M828.6 607.8h0M828.6 603.1h0M828.6 594.2h0M828.6 593.4h0M980.1 616.7h0M980.1 611.6h0M980.1 603.6h0M980.1 615.4h0M980.1 620.9h0M980.1 621.9h0M980.1 615.5h0M980.1 630.1h0M828.6 623.6h0M828.6 607.0h0M828.6 612.3h0M828.6 614.2h0M980.1 617.9h0M980.1 612.1h0M980.1 606.1h0M980.1 614.4h0M891.7 601.2h0M891.7 597.1h0M891.7 587.2h0M891.7 598.9h0M980.1 562.7h0M980.1 564.2h0M980.1 583.1h0M980.1 578.3h0M980.1 589.0h0M980.1 570.8h0M980.1 576.8h0M980.1 574.6h0M891.7 576.4h0M891.7 562.8h0M891.7 559.7h0M891.7 564.8h0M891.7 533.9h0M891.7 537.6h0M891.7 549.2h0M891.7 535.6h0M891.7 597.7h0M891.7 612.4h0M891.7 610.5h0M891.7 607.9h0M980.1 614.0h0M980.1 611.6h0M980.1 604.0h0M980.1 607.3h0M828.6 557.2h0M828.6 556.0h0M828.6 569.9h0M828.6 555.2h0M980.1 601.3h0M980.1 590.5h0M980.1 593.1h0M980.1 595.2h0M891.7 563.1h0M891.7 547.9h0M891.7 564.2h0M891.7 550.6h0M891.7 596.3h0M891.7 597.2h0M891.7 598.2h0M891.7 598.7h0M891.7 612.4h0M891.7 608.7h0M891.7 605.8h0M891.7 611.5h0M891.7 560.8h0M891.7 565.6h0M891.7 558.9h0M891.7 554.5h0M891.7 585.8h0M891.7 580.5h0M891.7 572.8h0M891.7 570.2h0M891.7 625.9h0M891.7 607.6h0M891.7 612.6h0M891.7 624.6h0M891.7 577.4h0M891.7 579.1h0M891.7 581.2h0M891.7 578.6h0M891.7 589.3h0M891.7 604.6h0M891.7 596.5h0M891.7 597.1h0M828.6 605.8h0M828.6 595.3h0M828.6 601.0h0M828.6 597.2h0M828.6 565.9h0M828.6 565.2h0M828.6 575.9h0M828.6 576.4h0M980.1 559.0h0M980.1 551.6h0M980.1 561.0h0M980.1 555.9h0M828.6 612.8h0M828.6 627.4h0M828.6 614.9h0M828.6 621.8h0M980.1 632.2h0M980.1 632.2h0M980.1 620.6h0M980.1 625.5h0M891.7 563.2h0M891.7 568.3h0M891.7 574.6h0M891.7 566.7h0M891.7 614.8h0M891.7 618.0h0M891.7 619.1h0M891.7 614.0h0M828.6 605.7h0M828.6 603.5h0M828.6 597.6h0M828.6 603.9h0M980.1 586.3h0M980.1 580.4h0M980.1 574.9h0M980.1 574.5h0M980.1 578.0h0M980.1 581.9h0M980.1 585.6h0M980.1 571.9h0M980.1 553.3h0M980.1 563.3h0M980.1 557.4h0M980.1 542.2h0M828.6 604.1h0M828.6 610.2h0M828.6 597.6h0M828.6 607.5h0M828.6 586.1h0M828.6 590.1h0M828.6 585.1h0M828.6 591.2h0M828.6 588.8h0M828.6 584.1h0M828.6 597.0h0M828.6 593.1h0M980.1 599.8h0M980.1 590.1h0M980.1 589.1h0M980.1 594.7h0M980.1 607.0h0M980.1 616.7h0M980.1 613.1h0M980.1 611.0h0M980.1 618.5h0M980.1 624.1h0M980.1 616.9h0M980.1 625.4h0M891.7 592.0h0M891.7 579.9h0M891.7 583.2h0M891.7 578.2h0M828.6 592.7h0M828.6 589.7h0M828.6 582.6h0M828.6 591.0h0M891.7 560.2h0M891.7 568.9h0M891.7 570.2h0M891.7 563.8h0M980.1 618.8h0M980.1 607.0h0M980.1 616.1h0M980.1 610.6h0M891.7 562.6h0M891.7 571.7h0M891.7 565.3h0M891.7 576.0h0M828.6 610.2h0M828.6 612.1h0M828.6 614.0h0M828.6 610.0h0M891.7 564.1h0M891.7 566.4h0M891.7 571.1h0M891.7 563.6h0M891.7 607.1h0M891.7 597.9h0M891.7 598.5h0M891.7 609.8h0M891.7 590.1h0M891.7 571.4h0M891.7 578.2h0M891.7 583.4h0M980.1 575.5h0M980.1 574.9h0M980.1 576.9h0M980.1 578.7h0M828.6 583.8h0M828.6 583.2h0M828.6 576.6h0M828.6 582.7h0M828.6 573.1h0M828.6 579.7h0M828.6 569.3h0M828.6 571.3h0M891.7 580.0h0M891.7 570.3h0M891.7 569.8h0M891.7 572.9h0M891.7 599.3h0M891.7 586.6h0M891.7 590.9h0M891.7 587.9h0M980.1 565.8h0M980.1 554.5h0M980.1 567.4h0M980.1 557.9h0M891.7 616.1h0M891.7 624.7h0M891.7 619.9h0M891.7 624.8h0M891.7 611.4h0M891.7 620.9h0M891.7 606.3h0M891.7 619.2h0M891.7 583.9h0M891.7 582.2h0M891.7 589.7h0M891.7 571.2h0M828.6 592.8h0M828.6 604.7h0M828.6 590.2h0M828.6 593.0h0M980.1 582.2h0M980.1 582.2h0M980.1 570.0h0M980.1 580.9h0M980.1 566.7h0M980.1 566.9h0M980.1 580.6h0M980.1 580.6h0M828.6 591.0h0M828.6 591.0h0M828.6 588.7h0M828.6 582.6h0M980.1 577.1h0M980.1 578.0h0M980.1 586.3h0M980.1 584.3h0M828.6 589.6h0M828.6 587.6h0M828.6 599.3h0M828.6 587.8h0M980.1 557.1h0M980.1 574.4h0M980.1 559.6h0M980.1 564.7h0M980.1 572.1h0M980.1 580.6h0M980.1 569.6h0M980.1 572.1h0M891.7 566.3h0M891.7 556.7h0M891.7 559.0h0M891.7 561.7h0M980.1 573.9h0M980.1 582.6h0M980.1 571.7h0M980.1 574.3h0M828.6 590.2h0M828.6 584.4h0M828.6 569.8h0M828.6 580.5h0M828.6 628.8h0M828.6 625.4h0M828.6 629.4h0M828.6 625.9h0M828.6 574.2h0M828.6 566.0h0M828.6 569.2h0M828.6 580.3h0M891.7 566.3h0M891.7 582.4h0M891.7 577.3h0M891.7 580.3h0M828.6 561.5h0M828.6 556.8h0M828.6 570.3h0M828.6 561.7h0M828.6 583.8h0M828.6 568.9h0M828.6 567.8h0M828.6 570.5h0M828.6 593.8h0M828.6 587.4h0M828.6 584.7h0M828.6 590.6h0M828.6 604.0h0M828.6 594.4h0M828.6 587.5h0M828.6 606.1h0M828.6 590.4h0M828.6 597.2h0M828.6 594.5h0M828.6 581.8h0M980.1 571.9h0M980.1 579.9h0M980.1 578.7h0M980.1 591.8h0M828.6 583.0h0M828.6 589.5h0M828.6 586.8h0M828.6 585.9h0M891.7 590.3h0M891.7 593.5h0M891.7 585.0h0M891.7 582.0h0M891.7 579.7h0M891.7 593.3h0M891.7 587.9h0M891.7 580.0h0M980.1 627.6h0M980.1 636.4h0M980.1 636.4h0M980.1 629.7h0M980.1 601.0h0M980.1 583.5h0M980.1 592.9h0M980.1 595.7h0M828.6 620.4h0M828.6 631.1h0M828.6 634.2h0M828.6 632.1h0M980.1 588.3h0M980.1 580.3h0M980.1 583.6h0M980.1 583.4h0M828.6 573.3h0M828.6 569.8h0M828.6 578.1h0M828.6 572.5h0M980.1 601.6h0M980.1 612.6h0M980.1 613.1h0M980.1 620.0h0M980.1 576.1h0M980.1 581.1h0M980.1 578.0h0M980.1 573.6h0M891.7 604.7h0M891.7 603.6h0M891.7 609.0h0M891.7 598.0h0M891.7 561.0h0M891.7 564.6h0M891.7 556.6h0M891.7 569.1h0M891.7 598.1h0M891.7 576.5h0M891.7 590.0h0M891.7 576.7h0M828.6 573.8h0M828.6 565.9h0M828.6 589.5h0M828.6 588.2h0M980.1 553.6h0M891.7 533.2h0M891.7 537.0h0M980.1 548.3h0M980.1 593.8h0M980.1 601.3h0M980.1 598.0h0M980.1 593.2h0M980.1 610.1h0M980.1 608.3h0M980.1 606.0h0M980.1 612.2h0M891.7 613.5h0M891.7 619.3h0M891.7 604.6h0M891.7 616.2h0M891.7 568.6h0M891.7 575.0h0M891.7 568.4h0M891.7 574.2h0M980.1 624.0h0M980.1 618.8h0M980.1 628.6h0M980.1 630.1h0M828.6 547.4h0M828.6 561.2h0M828.6 562.4h0M828.6 548.1h0M980.1 594.6h0M980.1 579.3h0M980.1 583.2h0M980.1 581.0h0M891.7 568.0h0M891.7 573.4h0M891.7 574.8h0M891.7 575.5h0M980.1 612.4h0M980.1 606.9h0M980.1 602.9h0M980.1 617.6h0M891.7 596.7h0M891.7 613.0h0M891.7 597.1h0M891.7 613.0h0M980.1 603.4h0M980.1 616.9h0M980.1 605.2h0M980.1 597.7h0M891.7 586.1h0M891.7 586.7h0M891.7 596.3h0M891.7 596.9h0M828.6 615.8h0M828.6 607.1h0M828.6 618.2h0M828.6 606.1h0M828.6 625.2h0M828.6 619.5h0M828.6 616.0h0M828.6 613.1h0M891.7 575.5h0M891.7 561.2h0M891.7 573.8h0M891.7 558.6h0M828.6 596.1h0M828.6 599.3h0M828.6 601.4h0M828.6 603.7h0M891.7 608.2h0M891.7 602.9h0M891.7 605.4h0M891.7 607.9h0M891.7 606.8h0M891.7 601.8h0M891.7 597.0h0M891.7 604.6h0M828.6 595.8h0M828.6 585.1h0M828.6 589.9h0M828.6 584.2h0M891.7 575.8h0M891.7 580.3h0M891.7 582.4h0M891.7 575.9h0M980.1 610.9h0M980.1 613.5h0M980.1 609.7h0M980.1 617.0h0M828.6 608.3h0M828.6 597.7h0M828.6 613.9h0M828.6 605.0h0M980.1 578.3h0M980.1 565.2h0M980.1 578.0h0M980.1 576.5h0M891.7 566.9h0M891.7 583.1h0M891.7 564.2h0M891.7 568.1h0M828.6 621.3h0M828.6 636.3h0M828.6 619.6h0M828.6 625.0h0M891.7 586.4h0M891.7 578.0h0M891.7 583.7h0M891.7 584.4h0M891.7 592.5h0M891.7 578.4h0M891.7 585.2h0M891.7 588.7h0M980.1 581.0h0M980.1 583.9h0M980.1 573.6h0M980.1 573.1h0M828.6 580.0h0M828.6 588.0h0M828.6 585.2h0M828.6 584.2h0M980.1 592.9h0M980.1 598.8h0M980.1 598.1h0M980.1 595.8h0M980.1 621.5h0M980.1 621.0h0M980.1 615.4h0M980.1 613.4h0M980.1 554.7h0M980.1 575.5h0M980.1 563.0h0M980.1 566.0h0M980.1 553.6h0M980.1 541.3h0M980.1 546.2h0M980.1 558.9h0M828.6 588.4h0M828.6 585.4h0M828.6 592.8h0M828.6 582.7h0M980.1 612.1h0M980.1 596.1h0M980.1 607.7h0M980.1 604.3h0M891.7 562.9h0M891.7 568.7h0M891.7 561.2h0M891.7 556.6h0M980.1 571.7h0M980.1 575.8h0M980.1 580.7h0M980.1 580.0h0M891.7 608.6h0M891.7 617.7h0M891.7 620.7h0M891.7 615.5h0M980.1 568.7h0M980.1 551.5h0M980.1 550.6h0M980.1 560.6h0M828.6 620.3h0M828.6 630.2h0M828.6 607.0h0M828.6 620.4h0M828.6 577.4h0M828.6 574.4h0M828.6 575.0h0M828.6 570.2h0M828.6 594.6h0M828.6 587.9h0M828.6 588.6h0M828.6 580.9h0M891.7 587.3h0M891.7 585.0h0M891.7 578.7h0M891.7 586.0h0M828.6 611.3h0M828.6 621.4h0M828.6 614.5h0M828.6 599.1h0M980.1 568.5h0M980.1 565.3h0M980.1 561.7h0M980.1 569.5h0M980.1 654.4h0M980.1 639.3h0M980.1 649.7h0M980.1 653.3h0M828.6 592.7h0M828.6 599.8h0M828.6 589.0h0M828.6 608.5h0M980.1 622.9h0M980.1 612.3h0M980.1 620.0h0M980.1 611.9h0M980.1 580.9h0M980.1 587.6h0M980.1 590.1h0M980.1 594.6h0M980.1 581.3h0M980.1 584.8h0M980.1 602.0h0M980.1 597.9h0M980.1 568.4h0M980.1 575.4h0M980.1 569.2h0M980.1 568.0h0M828.6 603.5h0M828.6 611.6h0M828.6 602.6h0M828.6 611.0h0M891.7 569.3h0M891.7 559.0h0M891.7 560.5h0M891.7 565.9h0M980.1 606.9h0M980.1 607.8h0M980.1 602.5h0M980.1 616.0h0M828.6 610.0h0M828.6 608.1h0M828.6 605.0h0M828.6 610.3h0M980.1 579.3h0M980.1 572.7h0M980.1 588.9h0M980.1 572.8h0M980.1 562.8h0M980.1 566.1h0M980.1 578.2h0M980.1 568.9h0M891.7 580.3h0M891.7 572.4h0M891.7 569.9h0M891.7 575.5h0M891.7 600.8h0M891.7 612.5h0M891.7 607.1h0M891.7 608.7h0M891.7 573.8h0M891.7 569.3h0M891.7 574.2h0M891.7 579.8h0M891.7 597.9h0M891.7 609.0h0M891.7 600.9h0M891.7 604.2h0M980.1 574.2h0M980.1 579.7h0M980.1 564.6h0M980.1 577.9h0M891.7 609.0h0M891.7 618.5h0M891.7 620.2h0M891.7 612.2h0M980.1 590.0h0M980.1 603.5h0M980.1 594.4h0M980.1 588.1h0M891.7 573.0h0M891.7 560.0h0M891.7 560.9h0M891.7 564.5h0M980.1 594.4h0M980.1 603.4h0M980.1 589.3h0M980.1 589.1h0M980.1 615.5h0M980.1 616.1h0M980.1 624.3h0M980.1 610.5h0M828.6 608.0h0M828.6 604.0h0M828.6 610.7h0M828.6 598.5h0M891.7 584.0h0M891.7 579.0h0M891.7 564.2h0M891.7 573.4h0M891.7 600.9h0M891.7 599.0h0M891.7 599.4h0M891.7 608.1h0M891.7 576.9h0M891.7 575.7h0M891.7 572.1h0M891.7 578.4h0M828.6 555.1h0M828.6 562.3h0M828.6 569.1h0M828.6 572.6h0M828.6 604.5h0M828.6 589.5h0M828.6 608.3h0M828.6 589.3h0M891.7 596.1h0M891.7 589.9h0M891.7 599.1h0M891.7 580.9h0M980.1 617.3h0M980.1 617.4h0M980.1 620.3h0M980.1 612.4h0M891.7 601.9h0M891.7 612.7h0M891.7 597.8h0M891.7 599.6h0M828.6 621.6h0M828.6 610.1h0M828.6 604.9h0M828.6 612.5h0M980.1 587.1h0M980.1 579.4h0M980.1 575.2h0M980.1 582.7h0M828.6 564.5h0M828.6 571.0h0M828.6 580.7h0M828.6 582.8h0M980.1 589.9h0M980.1 591.8h0M980.1 594.5h0M980.1 588.6h0M980.1 594.5h0M980.1 592.6h0M980.1 575.6h0M980.1 590.5h0M828.6 558.3h0M828.6 556.3h0M828.6 554.1h0M828.6 549.1h0M980.1 614.8h0M980.1 607.0h0M980.1 613.6h0M980.1 598.6h0M891.7 569.8h0M891.7 580.2h0M891.7 570.9h0M891.7 576.0h0M828.6 557.2h0M828.6 570.4h0M828.6 557.2h0M828.6 561.2h0M980.1 610.9h0M980.1 607.4h0M980.1 604.3h0M980.1 611.0h0M828.6 597.4h0M828.6 598.3h0M828.6 608.5h0M828.6 605.7h0M980.1 577.3h0M980.1 572.3h0M980.1 562.4h0M980.1 569.8h0M891.7 541.1h0M891.7 550.4h0M891.7 551.2h0M891.7 559.9h0M828.6 629.3h0M828.6 619.6h0M828.6 630.8h0M828.6 623.2h0M891.7 595.4h0M891.7 584.2h0M891.7 596.9h0M891.7 593.1h0M891.7 578.2h0M891.7 570.2h0M891.7 572.0h0M891.7 570.1h0M891.7 597.4h0M891.7 609.6h0M891.7 603.2h0M891.7 594.7h0M891.7 581.4h0M891.7 589.3h0M891.7 579.1h0M891.7 589.0h0M980.1 586.7h0M980.1 596.6h0M980.1 599.3h0M980.1 595.7h0" stroke="#1f77b4" stroke-width="3.4" stroke-linecap="round" fill="none"/><polyline points="828.57,592.07 904.35,579.91 980.13,594.04" stroke="#3a87be" stroke-width="1" fill="none"/><path d="M821.65 517.00V679.50H987.45M818.85 522.60H821.65M817.05 530.45H821.65M818.85 538.30H821.65M818.85 546.15H821.65M818.85 554.00H821.65M818.85 561.85H821.65M817.05 569.70H821.65M818.85 577.55H821.65M818.85 585.40H821.65M818.85 593.25H821.65M818.85 601.10H821.65M817.05 608.95H821.65M818.85 616.80H821.65M818.85 624.65H821.65M818.85 632.50H821.65M818.85 640.35H821.65M817.05 648.20H821.65M818.85 656.05H821.65M818.85 663.90H821.65M818.85 671.75H821.65M826.04 679.50V682.80M831.10 679.50V682.80M836.15 679.50V682.80M841.20 679.50V684.50M846.25 679.50V682.80M851.30 679.50V682.80M856.36 679.50V682.80M861.41 679.50V682.80M866.46 679.50V684.50M871.51 679.50V682.80M876.56 679.50V682.80M881.62 679.50V682.80M886.67 679.50V682.80M891.72 679.50V684.50M896.77 679.50V682.80M901.82 679.50V682.80M906.88 679.50V682.80M911.93 679.50V682.80M916.98 679.50V684.50M922.03 679.50V682.80M927.08 679.50V682.80M932.14 679.50V682.80M937.19 679.50V682.80M942.24 679.50V684.50M947.29 679.50V682.80M952.34 679.50V682.80M957.40 679.50V682.80M962.45 679.50V682.80M967.50 679.50V684.50M972.55 679.50V682.80M977.60 679.50V682.80M982.66 679.50V682.80" stroke="#222" stroke-width="1.1" fill="none"/></svg>
<div class="t" style="left:781.65px;top:525.45px;width:31.00px;text-align:right;font-size:9px;color:#555;line-height:10px">30</div>
<div class="t" style="left:781.65px;top:564.70px;width:31.00px;text-align:right;font-size:9px;color:#555;line-height:10px">20</div>
<div class="t" style="left:781.65px;top:603.95px;width:31.00px;text-align:right;font-size:9px;color:#555;line-height:10px">10</div>
<div class="t" style="left:781.65px;top:643.20px;width:31.00px;text-align:right;font-size:9px;color:#555;line-height:10px">0</div>
<div class="t" style="left:821.20px;top:687.50px;width:40px;text-align:center;font-size:9px;color:#555;line-height:10px">26</div>
<div class="t" style="left:846.46px;top:687.50px;width:40px;text-align:center;font-size:9px;color:#555;line-height:10px">28</div>
<div class="t" style="left:871.72px;top:687.50px;width:40px;text-align:center;font-size:9px;color:#555;line-height:10px">30</div>
<div class="t" style="left:896.98px;top:687.50px;width:40px;text-align:center;font-size:9px;color:#555;line-height:10px">32</div>
<div class="t" style="left:922.24px;top:687.50px;width:40px;text-align:center;font-size:9px;color:#555;line-height:10px">34</div>
<div class="t" style="left:947.50px;top:687.50px;width:40px;text-align:center;font-size:9px;color:#555;line-height:10px">36</div><svg class="b" style="left:0;top:0" width="1200" height="696">
<g stroke="#8a8a8a" fill="none" stroke-width="1.4">
<path d="M887.7 477.6V487.6M882.7 482.6H892.7"/>
<g fill="#8a8a8a" stroke="none"><path d="M884.7 479.2L887.7 475.9L890.7 479.2ZM884.7 486L887.7 489.3L890.7 486ZM884.3 479.6L881 482.6L884.3 485.6ZM891.1 479.6L894.4 482.6L891.1 485.6Z"/></g>
<rect x="905.3" y="477.8" width="4.6" height="10.2" rx="2.3"/>
<path d="M907.6 480V482.5" stroke-width="1"/>
<circle cx="916.3" cy="480.6" r="3.1"/>
<path d="M914.3 483.2L912.3 488.3"/>
<rect x="930.8" y="475.8" width="13.4" height="13.2" stroke-width="1.2"/>
<path d="M933.4 475.8V480.6H941.8V475.8" stroke-width="1.1"/>
<path d="M939.3 477V479" stroke-width="0.9"/>
<path d="M957.2 481.2A5.2 5.2 0 0 1 966.8 480.6M966.6 484A5.2 5.2 0 0 1 957.2 484.4" stroke-width="1.5"/>
<g fill="#8a8a8a" stroke="none"><path d="M965 480.2L968.8 480.2L967 483.4ZM955 484.8L958.8 484.8L956.9 481.6Z"/></g>
<path d="M981.4 477.4H991.9V485.4L986.65 488.4L981.4 485.4Z" stroke-width="1.1"/>
<path d="M983.5 479.6H989.6M983.5 481.3H989.6M983.5 483H989.6" stroke-width="0.8"/>
</g>
<g stroke="#e3e3e3" stroke-width="1"><path d="M900.4 478V487M925.1 478V487M974.6 478V487"/></g>
<rect x="875.6" y="493.1" width="24.2" height="1.8" fill="#4598c0"/>
<rect x="974.6" y="493.1" width="24.2" height="1.8" fill="#4598c0"/>
</svg>

</body></html>
